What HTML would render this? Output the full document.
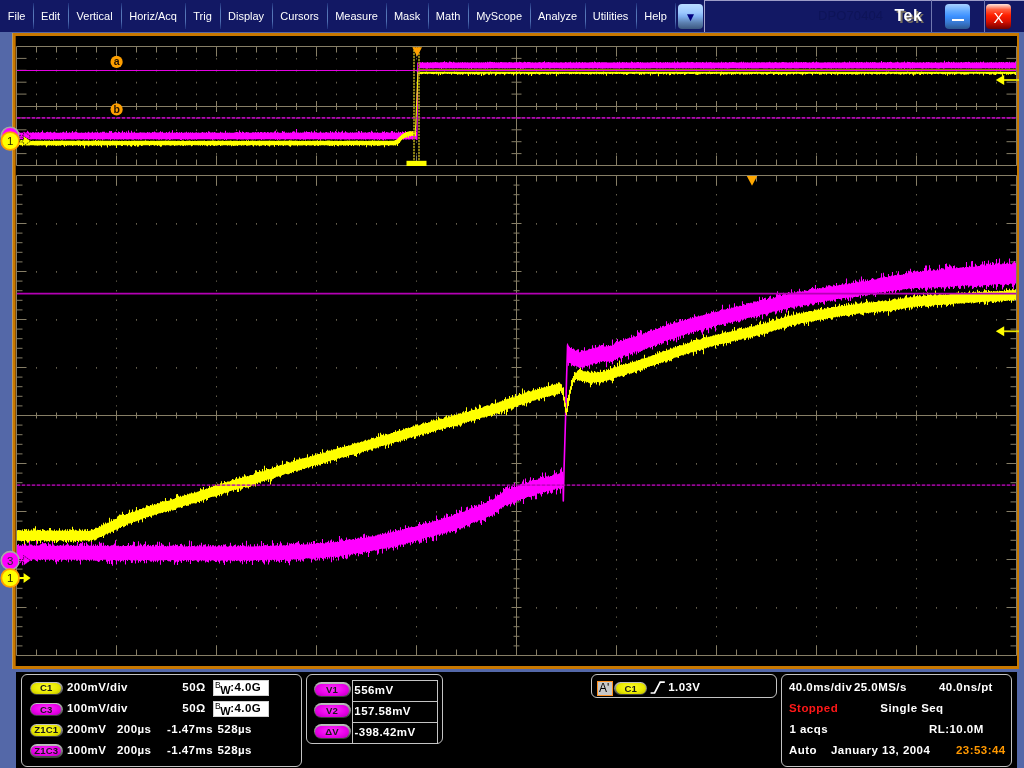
<!DOCTYPE html>
<html lang="en"><head><meta charset="utf-8"><title>Tek DPO70404</title>
<style>
html,body{margin:0;padding:0;}
body{width:1024px;height:768px;position:relative;overflow:hidden;background:#5468a8;font-family:"Liberation Sans",sans-serif;}
div,span{position:absolute;box-sizing:border-box;white-space:pre;}
#mb{left:0;top:0;width:1024px;height:32px;background:#121864;}
.mi{top:0;height:32px;line-height:32px;color:#fff;font-size:11px;text-align:center;padding-top:0px;}
.sep{top:3px;width:1px;height:26px;background:linear-gradient(#1c2c78,#5070b4 30%,#5878b8 50%,#5070b4 70%,#1c2c78);}
.vl{top:0;width:1px;height:32px;background:#7078b0;}
#dd{left:678px;top:4px;width:25px;height:25px;border-radius:4px;background:linear-gradient(#b8dcff,#9cc8ff 35%,#80b0f0 50%,#5c80b0 75%,#3c5880);}
#mn{left:945px;top:4px;width:25px;height:25px;border-radius:4px;background:linear-gradient(#a8d0ff,#60a8ff 30%,#3c90ff 50%,#3878d0 75%,#2c5890);}
#cl{left:986px;top:4px;width:25px;height:25px;border-radius:4px;background:linear-gradient(#ffe8e0,#ff6040 22%,#ff2000 45%,#d81000 70%,#700000);}
#org{left:12px;top:33px;width:1007px;height:636px;background:#c87800;}
#blk{left:16px;top:36px;width:1001px;height:630px;background:#000;}
#bot{left:16px;top:672px;width:1001px;height:96px;background:#000;}
.pn{border:1px solid #c4c4c4;border-radius:6px;}
.t{color:#fff;font-weight:bold;font-size:11.5px;line-height:1;letter-spacing:0.45px;}
.pill{border-radius:8px;}
.pt{color:#181818;font-weight:bold;font-size:9.6px;line-height:1;text-align:center;letter-spacing:0.1px;}
</style></head>
<body><div id="all" style="left:0;top:0;width:1024px;height:768px;will-change:transform">
<div id="mb">
<span class="mi" style="left:0.1px;width:33px">File</span>
<div class="sep" style="left:33px"></div>
<span class="mi" style="left:33.1px;width:35px">Edit</span>
<div class="sep" style="left:68px"></div>
<span class="mi" style="left:68.1px;width:53px">Vertical</span>
<div class="sep" style="left:121px"></div>
<span class="mi" style="left:121.1px;width:64px">Horiz/Acq</span>
<div class="sep" style="left:185px"></div>
<span class="mi" style="left:185.1px;width:35px">Trig</span>
<div class="sep" style="left:220px"></div>
<span class="mi" style="left:220.1px;width:52px">Display</span>
<div class="sep" style="left:272px"></div>
<span class="mi" style="left:272.1px;width:55px">Cursors</span>
<div class="sep" style="left:327px"></div>
<span class="mi" style="left:327.1px;width:59px">Measure</span>
<div class="sep" style="left:386px"></div>
<span class="mi" style="left:386.1px;width:42px">Mask</span>
<div class="sep" style="left:428px"></div>
<span class="mi" style="left:428.1px;width:40px">Math</span>
<div class="sep" style="left:468px"></div>
<span class="mi" style="left:468.1px;width:62px">MyScope</span>
<div class="sep" style="left:530px"></div>
<span class="mi" style="left:530.1px;width:55px">Analyze</span>
<div class="sep" style="left:585px"></div>
<span class="mi" style="left:585.1px;width:51px">Utilities</span>
<div class="sep" style="left:636px"></div>
<span class="mi" style="left:636.1px;width:39px">Help</span>
<div class="sep" style="left:675px"></div>
<div id="dd"><svg width="25" height="25" style="position:absolute;left:0;top:0"><path d="M9 10.3H16L12.5 17.2Z" fill="#000080"/></svg></div>
<div class="vl" style="left:704px;background:#a4a4cc"></div>
<div style="left:704px;top:0;width:320px;height:1px;background:#9c9cc8"></div>
<span style="left:818px;top:9px;font-size:13px;line-height:14px;color:#0e1458;letter-spacing:0.1px">DPO70404</span>
<span style="left:894.5px;top:7.5px;font-size:16px;line-height:16px;font-weight:bold;color:#fff;text-shadow:2px 2px 0 #787060;letter-spacing:0.5px">Tek</span>
<div class="vl" style="left:931px"></div><div class="vl" style="left:984px"></div>
<div id="mn"><div style="left:6.5px;top:15px;width:12px;height:2.4px;background:#fff"></div></div>
<div id="cl"><span style="left:0;top:0;width:25px;text-align:center;line-height:25px;top:0.5px;font-size:15px;color:#fff">X</span></div>
</div>
<div id="org"></div><div id="blk"></div><div id="bot"></div>
<svg width="1024" height="768" viewBox="0 0 1024 768" style="position:absolute;left:0;top:0">
<path d="M12.5 33V669" stroke="#c09858" stroke-width="1"/><path d="M15.5 36V666" stroke="#8c5000" stroke-width="1"/>
<path d="M16.5 46.5H1016.5V165.5H16.5Z M16.5 106.5H1016.5 M516.5 46.5V165.5" fill="none" stroke="#867e66" stroke-width="1"/>
<path d="M36.5 46.5v6M36.5 165.5v-6M36.5 103.0v7.0M56.5 46.5v6M56.5 165.5v-6M56.5 103.0v7.0M76.5 46.5v6M76.5 165.5v-6M76.5 103.0v7.0M96.5 46.5v6M96.5 165.5v-6M96.5 103.0v7.0M116.5 46.5v10M116.5 165.5v-10M116.5 101.0v11.0M136.5 46.5v6M136.5 165.5v-6M136.5 103.0v7.0M156.5 46.5v6M156.5 165.5v-6M156.5 103.0v7.0M176.5 46.5v6M176.5 165.5v-6M176.5 103.0v7.0M196.5 46.5v6M196.5 165.5v-6M196.5 103.0v7.0M216.5 46.5v10M216.5 165.5v-10M216.5 101.0v11.0M236.5 46.5v6M236.5 165.5v-6M236.5 103.0v7.0M256.5 46.5v6M256.5 165.5v-6M256.5 103.0v7.0M276.5 46.5v6M276.5 165.5v-6M276.5 103.0v7.0M296.5 46.5v6M296.5 165.5v-6M296.5 103.0v7.0M316.5 46.5v10M316.5 165.5v-10M316.5 101.0v11.0M336.5 46.5v6M336.5 165.5v-6M336.5 103.0v7.0M356.5 46.5v6M356.5 165.5v-6M356.5 103.0v7.0M376.5 46.5v6M376.5 165.5v-6M376.5 103.0v7.0M396.5 46.5v6M396.5 165.5v-6M396.5 103.0v7.0M416.5 46.5v10M416.5 165.5v-10M416.5 101.0v11.0M436.5 46.5v6M436.5 165.5v-6M436.5 103.0v7.0M456.5 46.5v6M456.5 165.5v-6M456.5 103.0v7.0M476.5 46.5v6M476.5 165.5v-6M476.5 103.0v7.0M496.5 46.5v6M496.5 165.5v-6M496.5 103.0v7.0M516.5 46.5v10M516.5 165.5v-10M516.5 101.0v11.0M536.5 46.5v6M536.5 165.5v-6M536.5 103.0v7.0M556.5 46.5v6M556.5 165.5v-6M556.5 103.0v7.0M576.5 46.5v6M576.5 165.5v-6M576.5 103.0v7.0M596.5 46.5v6M596.5 165.5v-6M596.5 103.0v7.0M616.5 46.5v10M616.5 165.5v-10M616.5 101.0v11.0M636.5 46.5v6M636.5 165.5v-6M636.5 103.0v7.0M656.5 46.5v6M656.5 165.5v-6M656.5 103.0v7.0M676.5 46.5v6M676.5 165.5v-6M676.5 103.0v7.0M696.5 46.5v6M696.5 165.5v-6M696.5 103.0v7.0M716.5 46.5v10M716.5 165.5v-10M716.5 101.0v11.0M736.5 46.5v6M736.5 165.5v-6M736.5 103.0v7.0M756.5 46.5v6M756.5 165.5v-6M756.5 103.0v7.0M776.5 46.5v6M776.5 165.5v-6M776.5 103.0v7.0M796.5 46.5v6M796.5 165.5v-6M796.5 103.0v7.0M816.5 46.5v10M816.5 165.5v-10M816.5 101.0v11.0M836.5 46.5v6M836.5 165.5v-6M836.5 103.0v7.0M856.5 46.5v6M856.5 165.5v-6M856.5 103.0v7.0M876.5 46.5v6M876.5 165.5v-6M876.5 103.0v7.0M896.5 46.5v6M896.5 165.5v-6M896.5 103.0v7.0M916.5 46.5v10M916.5 165.5v-10M916.5 101.0v11.0M936.5 46.5v6M936.5 165.5v-6M936.5 103.0v7.0M956.5 46.5v6M956.5 165.5v-6M956.5 103.0v7.0M976.5 46.5v6M976.5 165.5v-6M976.5 103.0v7.0M996.5 46.5v6M996.5 165.5v-6M996.5 103.0v7.0M16.5 58.4h10M1016.5 58.4h-10M511.5 58.4h10M16.5 70.3h10M1016.5 70.3h-10M511.5 70.3h10M16.5 82.2h10M1016.5 82.2h-10M511.5 82.2h10M16.5 94.1h10M1016.5 94.1h-10M511.5 94.1h10M16.5 117.9h10M1016.5 117.9h-10M511.5 117.9h10M16.5 129.8h10M1016.5 129.8h-10M511.5 129.8h10M16.5 141.7h10M1016.5 141.7h-10M511.5 141.7h10M16.5 153.6h10M1016.5 153.6h-10M511.5 153.6h10" fill="none" stroke="#867e66" stroke-width="1"/>
<path d="M36 57.9h1v1.7h-1zM56 57.9h1v1.7h-1zM76 57.9h1v1.7h-1zM96 57.9h1v1.7h-1zM116 57.9h1v1.7h-1zM136 57.9h1v1.7h-1zM156 57.9h1v1.7h-1zM176 57.9h1v1.7h-1zM196 57.9h1v1.7h-1zM216 57.9h1v1.7h-1zM236 57.9h1v1.7h-1zM256 57.9h1v1.7h-1zM276 57.9h1v1.7h-1zM296 57.9h1v1.7h-1zM316 57.9h1v1.7h-1zM336 57.9h1v1.7h-1zM356 57.9h1v1.7h-1zM376 57.9h1v1.7h-1zM396 57.9h1v1.7h-1zM416 57.9h1v1.7h-1zM436 57.9h1v1.7h-1zM456 57.9h1v1.7h-1zM476 57.9h1v1.7h-1zM496 57.9h1v1.7h-1zM536 57.9h1v1.7h-1zM556 57.9h1v1.7h-1zM576 57.9h1v1.7h-1zM596 57.9h1v1.7h-1zM616 57.9h1v1.7h-1zM636 57.9h1v1.7h-1zM656 57.9h1v1.7h-1zM676 57.9h1v1.7h-1zM696 57.9h1v1.7h-1zM716 57.9h1v1.7h-1zM736 57.9h1v1.7h-1zM756 57.9h1v1.7h-1zM776 57.9h1v1.7h-1zM796 57.9h1v1.7h-1zM816 57.9h1v1.7h-1zM836 57.9h1v1.7h-1zM856 57.9h1v1.7h-1zM876 57.9h1v1.7h-1zM896 57.9h1v1.7h-1zM916 57.9h1v1.7h-1zM936 57.9h1v1.7h-1zM956 57.9h1v1.7h-1zM976 57.9h1v1.7h-1zM996 57.9h1v1.7h-1zM36 69.8h1v1.7h-1zM56 69.8h1v1.7h-1zM76 69.8h1v1.7h-1zM96 69.8h1v1.7h-1zM116 69.8h1v1.7h-1zM136 69.8h1v1.7h-1zM156 69.8h1v1.7h-1zM176 69.8h1v1.7h-1zM196 69.8h1v1.7h-1zM216 69.8h1v1.7h-1zM236 69.8h1v1.7h-1zM256 69.8h1v1.7h-1zM276 69.8h1v1.7h-1zM296 69.8h1v1.7h-1zM316 69.8h1v1.7h-1zM336 69.8h1v1.7h-1zM356 69.8h1v1.7h-1zM376 69.8h1v1.7h-1zM396 69.8h1v1.7h-1zM416 69.8h1v1.7h-1zM436 69.8h1v1.7h-1zM456 69.8h1v1.7h-1zM476 69.8h1v1.7h-1zM496 69.8h1v1.7h-1zM536 69.8h1v1.7h-1zM556 69.8h1v1.7h-1zM576 69.8h1v1.7h-1zM596 69.8h1v1.7h-1zM616 69.8h1v1.7h-1zM636 69.8h1v1.7h-1zM656 69.8h1v1.7h-1zM676 69.8h1v1.7h-1zM696 69.8h1v1.7h-1zM716 69.8h1v1.7h-1zM736 69.8h1v1.7h-1zM756 69.8h1v1.7h-1zM776 69.8h1v1.7h-1zM796 69.8h1v1.7h-1zM816 69.8h1v1.7h-1zM836 69.8h1v1.7h-1zM856 69.8h1v1.7h-1zM876 69.8h1v1.7h-1zM896 69.8h1v1.7h-1zM916 69.8h1v1.7h-1zM936 69.8h1v1.7h-1zM956 69.8h1v1.7h-1zM976 69.8h1v1.7h-1zM996 69.8h1v1.7h-1zM36 81.7h1v1.7h-1zM56 81.7h1v1.7h-1zM76 81.7h1v1.7h-1zM96 81.7h1v1.7h-1zM116 81.7h1v1.7h-1zM136 81.7h1v1.7h-1zM156 81.7h1v1.7h-1zM176 81.7h1v1.7h-1zM196 81.7h1v1.7h-1zM216 81.7h1v1.7h-1zM236 81.7h1v1.7h-1zM256 81.7h1v1.7h-1zM276 81.7h1v1.7h-1zM296 81.7h1v1.7h-1zM316 81.7h1v1.7h-1zM336 81.7h1v1.7h-1zM356 81.7h1v1.7h-1zM376 81.7h1v1.7h-1zM396 81.7h1v1.7h-1zM416 81.7h1v1.7h-1zM436 81.7h1v1.7h-1zM456 81.7h1v1.7h-1zM476 81.7h1v1.7h-1zM496 81.7h1v1.7h-1zM536 81.7h1v1.7h-1zM556 81.7h1v1.7h-1zM576 81.7h1v1.7h-1zM596 81.7h1v1.7h-1zM616 81.7h1v1.7h-1zM636 81.7h1v1.7h-1zM656 81.7h1v1.7h-1zM676 81.7h1v1.7h-1zM696 81.7h1v1.7h-1zM716 81.7h1v1.7h-1zM736 81.7h1v1.7h-1zM756 81.7h1v1.7h-1zM776 81.7h1v1.7h-1zM796 81.7h1v1.7h-1zM816 81.7h1v1.7h-1zM836 81.7h1v1.7h-1zM856 81.7h1v1.7h-1zM876 81.7h1v1.7h-1zM896 81.7h1v1.7h-1zM916 81.7h1v1.7h-1zM936 81.7h1v1.7h-1zM956 81.7h1v1.7h-1zM976 81.7h1v1.7h-1zM996 81.7h1v1.7h-1zM36 93.6h1v1.7h-1zM56 93.6h1v1.7h-1zM76 93.6h1v1.7h-1zM96 93.6h1v1.7h-1zM116 93.6h1v1.7h-1zM136 93.6h1v1.7h-1zM156 93.6h1v1.7h-1zM176 93.6h1v1.7h-1zM196 93.6h1v1.7h-1zM216 93.6h1v1.7h-1zM236 93.6h1v1.7h-1zM256 93.6h1v1.7h-1zM276 93.6h1v1.7h-1zM296 93.6h1v1.7h-1zM316 93.6h1v1.7h-1zM336 93.6h1v1.7h-1zM356 93.6h1v1.7h-1zM376 93.6h1v1.7h-1zM396 93.6h1v1.7h-1zM416 93.6h1v1.7h-1zM436 93.6h1v1.7h-1zM456 93.6h1v1.7h-1zM476 93.6h1v1.7h-1zM496 93.6h1v1.7h-1zM536 93.6h1v1.7h-1zM556 93.6h1v1.7h-1zM576 93.6h1v1.7h-1zM596 93.6h1v1.7h-1zM616 93.6h1v1.7h-1zM636 93.6h1v1.7h-1zM656 93.6h1v1.7h-1zM676 93.6h1v1.7h-1zM696 93.6h1v1.7h-1zM716 93.6h1v1.7h-1zM736 93.6h1v1.7h-1zM756 93.6h1v1.7h-1zM776 93.6h1v1.7h-1zM796 93.6h1v1.7h-1zM816 93.6h1v1.7h-1zM836 93.6h1v1.7h-1zM856 93.6h1v1.7h-1zM876 93.6h1v1.7h-1zM896 93.6h1v1.7h-1zM916 93.6h1v1.7h-1zM936 93.6h1v1.7h-1zM956 93.6h1v1.7h-1zM976 93.6h1v1.7h-1zM996 93.6h1v1.7h-1zM36 117.4h1v1.7h-1zM56 117.4h1v1.7h-1zM76 117.4h1v1.7h-1zM96 117.4h1v1.7h-1zM116 117.4h1v1.7h-1zM136 117.4h1v1.7h-1zM156 117.4h1v1.7h-1zM176 117.4h1v1.7h-1zM196 117.4h1v1.7h-1zM216 117.4h1v1.7h-1zM236 117.4h1v1.7h-1zM256 117.4h1v1.7h-1zM276 117.4h1v1.7h-1zM296 117.4h1v1.7h-1zM316 117.4h1v1.7h-1zM336 117.4h1v1.7h-1zM356 117.4h1v1.7h-1zM376 117.4h1v1.7h-1zM396 117.4h1v1.7h-1zM416 117.4h1v1.7h-1zM436 117.4h1v1.7h-1zM456 117.4h1v1.7h-1zM476 117.4h1v1.7h-1zM496 117.4h1v1.7h-1zM536 117.4h1v1.7h-1zM556 117.4h1v1.7h-1zM576 117.4h1v1.7h-1zM596 117.4h1v1.7h-1zM616 117.4h1v1.7h-1zM636 117.4h1v1.7h-1zM656 117.4h1v1.7h-1zM676 117.4h1v1.7h-1zM696 117.4h1v1.7h-1zM716 117.4h1v1.7h-1zM736 117.4h1v1.7h-1zM756 117.4h1v1.7h-1zM776 117.4h1v1.7h-1zM796 117.4h1v1.7h-1zM816 117.4h1v1.7h-1zM836 117.4h1v1.7h-1zM856 117.4h1v1.7h-1zM876 117.4h1v1.7h-1zM896 117.4h1v1.7h-1zM916 117.4h1v1.7h-1zM936 117.4h1v1.7h-1zM956 117.4h1v1.7h-1zM976 117.4h1v1.7h-1zM996 117.4h1v1.7h-1zM36 129.3h1v1.7h-1zM56 129.3h1v1.7h-1zM76 129.3h1v1.7h-1zM96 129.3h1v1.7h-1zM116 129.3h1v1.7h-1zM136 129.3h1v1.7h-1zM156 129.3h1v1.7h-1zM176 129.3h1v1.7h-1zM196 129.3h1v1.7h-1zM216 129.3h1v1.7h-1zM236 129.3h1v1.7h-1zM256 129.3h1v1.7h-1zM276 129.3h1v1.7h-1zM296 129.3h1v1.7h-1zM316 129.3h1v1.7h-1zM336 129.3h1v1.7h-1zM356 129.3h1v1.7h-1zM376 129.3h1v1.7h-1zM396 129.3h1v1.7h-1zM416 129.3h1v1.7h-1zM436 129.3h1v1.7h-1zM456 129.3h1v1.7h-1zM476 129.3h1v1.7h-1zM496 129.3h1v1.7h-1zM536 129.3h1v1.7h-1zM556 129.3h1v1.7h-1zM576 129.3h1v1.7h-1zM596 129.3h1v1.7h-1zM616 129.3h1v1.7h-1zM636 129.3h1v1.7h-1zM656 129.3h1v1.7h-1zM676 129.3h1v1.7h-1zM696 129.3h1v1.7h-1zM716 129.3h1v1.7h-1zM736 129.3h1v1.7h-1zM756 129.3h1v1.7h-1zM776 129.3h1v1.7h-1zM796 129.3h1v1.7h-1zM816 129.3h1v1.7h-1zM836 129.3h1v1.7h-1zM856 129.3h1v1.7h-1zM876 129.3h1v1.7h-1zM896 129.3h1v1.7h-1zM916 129.3h1v1.7h-1zM936 129.3h1v1.7h-1zM956 129.3h1v1.7h-1zM976 129.3h1v1.7h-1zM996 129.3h1v1.7h-1zM36 141.2h1v1.7h-1zM56 141.2h1v1.7h-1zM76 141.2h1v1.7h-1zM96 141.2h1v1.7h-1zM116 141.2h1v1.7h-1zM136 141.2h1v1.7h-1zM156 141.2h1v1.7h-1zM176 141.2h1v1.7h-1zM196 141.2h1v1.7h-1zM216 141.2h1v1.7h-1zM236 141.2h1v1.7h-1zM256 141.2h1v1.7h-1zM276 141.2h1v1.7h-1zM296 141.2h1v1.7h-1zM316 141.2h1v1.7h-1zM336 141.2h1v1.7h-1zM356 141.2h1v1.7h-1zM376 141.2h1v1.7h-1zM396 141.2h1v1.7h-1zM416 141.2h1v1.7h-1zM436 141.2h1v1.7h-1zM456 141.2h1v1.7h-1zM476 141.2h1v1.7h-1zM496 141.2h1v1.7h-1zM536 141.2h1v1.7h-1zM556 141.2h1v1.7h-1zM576 141.2h1v1.7h-1zM596 141.2h1v1.7h-1zM616 141.2h1v1.7h-1zM636 141.2h1v1.7h-1zM656 141.2h1v1.7h-1zM676 141.2h1v1.7h-1zM696 141.2h1v1.7h-1zM716 141.2h1v1.7h-1zM736 141.2h1v1.7h-1zM756 141.2h1v1.7h-1zM776 141.2h1v1.7h-1zM796 141.2h1v1.7h-1zM816 141.2h1v1.7h-1zM836 141.2h1v1.7h-1zM856 141.2h1v1.7h-1zM876 141.2h1v1.7h-1zM896 141.2h1v1.7h-1zM916 141.2h1v1.7h-1zM936 141.2h1v1.7h-1zM956 141.2h1v1.7h-1zM976 141.2h1v1.7h-1zM996 141.2h1v1.7h-1zM36 153.1h1v1.7h-1zM56 153.1h1v1.7h-1zM76 153.1h1v1.7h-1zM96 153.1h1v1.7h-1zM116 153.1h1v1.7h-1zM136 153.1h1v1.7h-1zM156 153.1h1v1.7h-1zM176 153.1h1v1.7h-1zM196 153.1h1v1.7h-1zM216 153.1h1v1.7h-1zM236 153.1h1v1.7h-1zM256 153.1h1v1.7h-1zM276 153.1h1v1.7h-1zM296 153.1h1v1.7h-1zM316 153.1h1v1.7h-1zM336 153.1h1v1.7h-1zM356 153.1h1v1.7h-1zM376 153.1h1v1.7h-1zM396 153.1h1v1.7h-1zM416 153.1h1v1.7h-1zM436 153.1h1v1.7h-1zM456 153.1h1v1.7h-1zM476 153.1h1v1.7h-1zM496 153.1h1v1.7h-1zM536 153.1h1v1.7h-1zM556 153.1h1v1.7h-1zM576 153.1h1v1.7h-1zM596 153.1h1v1.7h-1zM616 153.1h1v1.7h-1zM636 153.1h1v1.7h-1zM656 153.1h1v1.7h-1zM676 153.1h1v1.7h-1zM696 153.1h1v1.7h-1zM716 153.1h1v1.7h-1zM736 153.1h1v1.7h-1zM756 153.1h1v1.7h-1zM776 153.1h1v1.7h-1zM796 153.1h1v1.7h-1zM816 153.1h1v1.7h-1zM836 153.1h1v1.7h-1zM856 153.1h1v1.7h-1zM876 153.1h1v1.7h-1zM896 153.1h1v1.7h-1zM916 153.1h1v1.7h-1zM936 153.1h1v1.7h-1zM956 153.1h1v1.7h-1zM976 153.1h1v1.7h-1zM996 153.1h1v1.7h-1z" fill="#867e66" opacity="0.75"/>
<path d="M16.5 175.5H1016.5V655.5H16.5Z M16.5 415.5H1016.5 M516.5 175.5V655.5" fill="none" stroke="#867e66" stroke-width="1"/>
<path d="M36.5 175.5v6M36.5 655.5v-6M36.5 412.5v6M56.5 175.5v6M56.5 655.5v-6M56.5 412.5v6M76.5 175.5v6M76.5 655.5v-6M76.5 412.5v6M96.5 175.5v6M96.5 655.5v-6M96.5 412.5v6M116.5 175.5v10M116.5 655.5v-10M116.5 410.5v10M136.5 175.5v6M136.5 655.5v-6M136.5 412.5v6M156.5 175.5v6M156.5 655.5v-6M156.5 412.5v6M176.5 175.5v6M176.5 655.5v-6M176.5 412.5v6M196.5 175.5v6M196.5 655.5v-6M196.5 412.5v6M216.5 175.5v10M216.5 655.5v-10M216.5 410.5v10M236.5 175.5v6M236.5 655.5v-6M236.5 412.5v6M256.5 175.5v6M256.5 655.5v-6M256.5 412.5v6M276.5 175.5v6M276.5 655.5v-6M276.5 412.5v6M296.5 175.5v6M296.5 655.5v-6M296.5 412.5v6M316.5 175.5v10M316.5 655.5v-10M316.5 410.5v10M336.5 175.5v6M336.5 655.5v-6M336.5 412.5v6M356.5 175.5v6M356.5 655.5v-6M356.5 412.5v6M376.5 175.5v6M376.5 655.5v-6M376.5 412.5v6M396.5 175.5v6M396.5 655.5v-6M396.5 412.5v6M416.5 175.5v10M416.5 655.5v-10M416.5 410.5v10M436.5 175.5v6M436.5 655.5v-6M436.5 412.5v6M456.5 175.5v6M456.5 655.5v-6M456.5 412.5v6M476.5 175.5v6M476.5 655.5v-6M476.5 412.5v6M496.5 175.5v6M496.5 655.5v-6M496.5 412.5v6M516.5 175.5v10M516.5 655.5v-10M516.5 410.5v10M536.5 175.5v6M536.5 655.5v-6M536.5 412.5v6M556.5 175.5v6M556.5 655.5v-6M556.5 412.5v6M576.5 175.5v6M576.5 655.5v-6M576.5 412.5v6M596.5 175.5v6M596.5 655.5v-6M596.5 412.5v6M616.5 175.5v10M616.5 655.5v-10M616.5 410.5v10M636.5 175.5v6M636.5 655.5v-6M636.5 412.5v6M656.5 175.5v6M656.5 655.5v-6M656.5 412.5v6M676.5 175.5v6M676.5 655.5v-6M676.5 412.5v6M696.5 175.5v6M696.5 655.5v-6M696.5 412.5v6M716.5 175.5v10M716.5 655.5v-10M716.5 410.5v10M736.5 175.5v6M736.5 655.5v-6M736.5 412.5v6M756.5 175.5v6M756.5 655.5v-6M756.5 412.5v6M776.5 175.5v6M776.5 655.5v-6M776.5 412.5v6M796.5 175.5v6M796.5 655.5v-6M796.5 412.5v6M816.5 175.5v10M816.5 655.5v-10M816.5 410.5v10M836.5 175.5v6M836.5 655.5v-6M836.5 412.5v6M856.5 175.5v6M856.5 655.5v-6M856.5 412.5v6M876.5 175.5v6M876.5 655.5v-6M876.5 412.5v6M896.5 175.5v6M896.5 655.5v-6M896.5 412.5v6M916.5 175.5v10M916.5 655.5v-10M916.5 410.5v10M936.5 175.5v6M936.5 655.5v-6M936.5 412.5v6M956.5 175.5v6M956.5 655.5v-6M956.5 412.5v6M976.5 175.5v6M976.5 655.5v-6M976.5 412.5v6M996.5 175.5v6M996.5 655.5v-6M996.5 412.5v6M16.5 185.1h6M1016.5 185.1h-6M513.5 185.1h6M16.5 194.7h6M1016.5 194.7h-6M513.5 194.7h6M16.5 204.3h6M1016.5 204.3h-6M513.5 204.3h6M16.5 213.9h6M1016.5 213.9h-6M513.5 213.9h6M16.5 223.5h10M1016.5 223.5h-10M511.5 223.5h10M16.5 233.1h6M1016.5 233.1h-6M513.5 233.1h6M16.5 242.7h6M1016.5 242.7h-6M513.5 242.7h6M16.5 252.3h6M1016.5 252.3h-6M513.5 252.3h6M16.5 261.9h6M1016.5 261.9h-6M513.5 261.9h6M16.5 271.5h10M1016.5 271.5h-10M511.5 271.5h10M16.5 281.1h6M1016.5 281.1h-6M513.5 281.1h6M16.5 290.7h6M1016.5 290.7h-6M513.5 290.7h6M16.5 300.3h6M1016.5 300.3h-6M513.5 300.3h6M16.5 309.9h6M1016.5 309.9h-6M513.5 309.9h6M16.5 319.5h10M1016.5 319.5h-10M511.5 319.5h10M16.5 329.1h6M1016.5 329.1h-6M513.5 329.1h6M16.5 338.7h6M1016.5 338.7h-6M513.5 338.7h6M16.5 348.3h6M1016.5 348.3h-6M513.5 348.3h6M16.5 357.9h6M1016.5 357.9h-6M513.5 357.9h6M16.5 367.5h10M1016.5 367.5h-10M511.5 367.5h10M16.5 377.1h6M1016.5 377.1h-6M513.5 377.1h6M16.5 386.7h6M1016.5 386.7h-6M513.5 386.7h6M16.5 396.3h6M1016.5 396.3h-6M513.5 396.3h6M16.5 405.9h6M1016.5 405.9h-6M513.5 405.9h6M16.5 415.5h10M1016.5 415.5h-10M511.5 415.5h10M16.5 425.1h6M1016.5 425.1h-6M513.5 425.1h6M16.5 434.7h6M1016.5 434.7h-6M513.5 434.7h6M16.5 444.3h6M1016.5 444.3h-6M513.5 444.3h6M16.5 453.9h6M1016.5 453.9h-6M513.5 453.9h6M16.5 463.5h10M1016.5 463.5h-10M511.5 463.5h10M16.5 473.1h6M1016.5 473.1h-6M513.5 473.1h6M16.5 482.7h6M1016.5 482.7h-6M513.5 482.7h6M16.5 492.3h6M1016.5 492.3h-6M513.5 492.3h6M16.5 501.9h6M1016.5 501.9h-6M513.5 501.9h6M16.5 511.5h10M1016.5 511.5h-10M511.5 511.5h10M16.5 521.1h6M1016.5 521.1h-6M513.5 521.1h6M16.5 530.7h6M1016.5 530.7h-6M513.5 530.7h6M16.5 540.3h6M1016.5 540.3h-6M513.5 540.3h6M16.5 549.9h6M1016.5 549.9h-6M513.5 549.9h6M16.5 559.5h10M1016.5 559.5h-10M511.5 559.5h10M16.5 569.1h6M1016.5 569.1h-6M513.5 569.1h6M16.5 578.7h6M1016.5 578.7h-6M513.5 578.7h6M16.5 588.3h6M1016.5 588.3h-6M513.5 588.3h6M16.5 597.9h6M1016.5 597.9h-6M513.5 597.9h6M16.5 607.5h10M1016.5 607.5h-10M511.5 607.5h10M16.5 617.1h6M1016.5 617.1h-6M513.5 617.1h6M16.5 626.7h6M1016.5 626.7h-6M513.5 626.7h6M16.5 636.3h6M1016.5 636.3h-6M513.5 636.3h6M16.5 645.9h6M1016.5 645.9h-6M513.5 645.9h6" fill="none" stroke="#867e66" stroke-width="1"/>
<path d="M36 223h1v1.7h-1zM56 223h1v1.7h-1zM76 223h1v1.7h-1zM96 223h1v1.7h-1zM116 223h1v1.7h-1zM136 223h1v1.7h-1zM156 223h1v1.7h-1zM176 223h1v1.7h-1zM196 223h1v1.7h-1zM216 223h1v1.7h-1zM236 223h1v1.7h-1zM256 223h1v1.7h-1zM276 223h1v1.7h-1zM296 223h1v1.7h-1zM316 223h1v1.7h-1zM336 223h1v1.7h-1zM356 223h1v1.7h-1zM376 223h1v1.7h-1zM396 223h1v1.7h-1zM416 223h1v1.7h-1zM436 223h1v1.7h-1zM456 223h1v1.7h-1zM476 223h1v1.7h-1zM496 223h1v1.7h-1zM516 223h1v1.7h-1zM536 223h1v1.7h-1zM556 223h1v1.7h-1zM576 223h1v1.7h-1zM596 223h1v1.7h-1zM616 223h1v1.7h-1zM636 223h1v1.7h-1zM656 223h1v1.7h-1zM676 223h1v1.7h-1zM696 223h1v1.7h-1zM716 223h1v1.7h-1zM736 223h1v1.7h-1zM756 223h1v1.7h-1zM776 223h1v1.7h-1zM796 223h1v1.7h-1zM816 223h1v1.7h-1zM836 223h1v1.7h-1zM856 223h1v1.7h-1zM876 223h1v1.7h-1zM896 223h1v1.7h-1zM916 223h1v1.7h-1zM936 223h1v1.7h-1zM956 223h1v1.7h-1zM976 223h1v1.7h-1zM996 223h1v1.7h-1zM36 271h1v1.7h-1zM56 271h1v1.7h-1zM76 271h1v1.7h-1zM96 271h1v1.7h-1zM116 271h1v1.7h-1zM136 271h1v1.7h-1zM156 271h1v1.7h-1zM176 271h1v1.7h-1zM196 271h1v1.7h-1zM216 271h1v1.7h-1zM236 271h1v1.7h-1zM256 271h1v1.7h-1zM276 271h1v1.7h-1zM296 271h1v1.7h-1zM316 271h1v1.7h-1zM336 271h1v1.7h-1zM356 271h1v1.7h-1zM376 271h1v1.7h-1zM396 271h1v1.7h-1zM416 271h1v1.7h-1zM436 271h1v1.7h-1zM456 271h1v1.7h-1zM476 271h1v1.7h-1zM496 271h1v1.7h-1zM516 271h1v1.7h-1zM536 271h1v1.7h-1zM556 271h1v1.7h-1zM576 271h1v1.7h-1zM596 271h1v1.7h-1zM616 271h1v1.7h-1zM636 271h1v1.7h-1zM656 271h1v1.7h-1zM676 271h1v1.7h-1zM696 271h1v1.7h-1zM716 271h1v1.7h-1zM736 271h1v1.7h-1zM756 271h1v1.7h-1zM776 271h1v1.7h-1zM796 271h1v1.7h-1zM816 271h1v1.7h-1zM836 271h1v1.7h-1zM856 271h1v1.7h-1zM876 271h1v1.7h-1zM896 271h1v1.7h-1zM916 271h1v1.7h-1zM936 271h1v1.7h-1zM956 271h1v1.7h-1zM976 271h1v1.7h-1zM996 271h1v1.7h-1zM36 319h1v1.7h-1zM56 319h1v1.7h-1zM76 319h1v1.7h-1zM96 319h1v1.7h-1zM116 319h1v1.7h-1zM136 319h1v1.7h-1zM156 319h1v1.7h-1zM176 319h1v1.7h-1zM196 319h1v1.7h-1zM216 319h1v1.7h-1zM236 319h1v1.7h-1zM256 319h1v1.7h-1zM276 319h1v1.7h-1zM296 319h1v1.7h-1zM316 319h1v1.7h-1zM336 319h1v1.7h-1zM356 319h1v1.7h-1zM376 319h1v1.7h-1zM396 319h1v1.7h-1zM416 319h1v1.7h-1zM436 319h1v1.7h-1zM456 319h1v1.7h-1zM476 319h1v1.7h-1zM496 319h1v1.7h-1zM516 319h1v1.7h-1zM536 319h1v1.7h-1zM556 319h1v1.7h-1zM576 319h1v1.7h-1zM596 319h1v1.7h-1zM616 319h1v1.7h-1zM636 319h1v1.7h-1zM656 319h1v1.7h-1zM676 319h1v1.7h-1zM696 319h1v1.7h-1zM716 319h1v1.7h-1zM736 319h1v1.7h-1zM756 319h1v1.7h-1zM776 319h1v1.7h-1zM796 319h1v1.7h-1zM816 319h1v1.7h-1zM836 319h1v1.7h-1zM856 319h1v1.7h-1zM876 319h1v1.7h-1zM896 319h1v1.7h-1zM916 319h1v1.7h-1zM936 319h1v1.7h-1zM956 319h1v1.7h-1zM976 319h1v1.7h-1zM996 319h1v1.7h-1zM36 367h1v1.7h-1zM56 367h1v1.7h-1zM76 367h1v1.7h-1zM96 367h1v1.7h-1zM116 367h1v1.7h-1zM136 367h1v1.7h-1zM156 367h1v1.7h-1zM176 367h1v1.7h-1zM196 367h1v1.7h-1zM216 367h1v1.7h-1zM236 367h1v1.7h-1zM256 367h1v1.7h-1zM276 367h1v1.7h-1zM296 367h1v1.7h-1zM316 367h1v1.7h-1zM336 367h1v1.7h-1zM356 367h1v1.7h-1zM376 367h1v1.7h-1zM396 367h1v1.7h-1zM416 367h1v1.7h-1zM436 367h1v1.7h-1zM456 367h1v1.7h-1zM476 367h1v1.7h-1zM496 367h1v1.7h-1zM516 367h1v1.7h-1zM536 367h1v1.7h-1zM556 367h1v1.7h-1zM576 367h1v1.7h-1zM596 367h1v1.7h-1zM616 367h1v1.7h-1zM636 367h1v1.7h-1zM656 367h1v1.7h-1zM676 367h1v1.7h-1zM696 367h1v1.7h-1zM716 367h1v1.7h-1zM736 367h1v1.7h-1zM756 367h1v1.7h-1zM776 367h1v1.7h-1zM796 367h1v1.7h-1zM816 367h1v1.7h-1zM836 367h1v1.7h-1zM856 367h1v1.7h-1zM876 367h1v1.7h-1zM896 367h1v1.7h-1zM916 367h1v1.7h-1zM936 367h1v1.7h-1zM956 367h1v1.7h-1zM976 367h1v1.7h-1zM996 367h1v1.7h-1zM36 463h1v1.7h-1zM56 463h1v1.7h-1zM76 463h1v1.7h-1zM96 463h1v1.7h-1zM116 463h1v1.7h-1zM136 463h1v1.7h-1zM156 463h1v1.7h-1zM176 463h1v1.7h-1zM196 463h1v1.7h-1zM216 463h1v1.7h-1zM236 463h1v1.7h-1zM256 463h1v1.7h-1zM276 463h1v1.7h-1zM296 463h1v1.7h-1zM316 463h1v1.7h-1zM336 463h1v1.7h-1zM356 463h1v1.7h-1zM376 463h1v1.7h-1zM396 463h1v1.7h-1zM416 463h1v1.7h-1zM436 463h1v1.7h-1zM456 463h1v1.7h-1zM476 463h1v1.7h-1zM496 463h1v1.7h-1zM516 463h1v1.7h-1zM536 463h1v1.7h-1zM556 463h1v1.7h-1zM576 463h1v1.7h-1zM596 463h1v1.7h-1zM616 463h1v1.7h-1zM636 463h1v1.7h-1zM656 463h1v1.7h-1zM676 463h1v1.7h-1zM696 463h1v1.7h-1zM716 463h1v1.7h-1zM736 463h1v1.7h-1zM756 463h1v1.7h-1zM776 463h1v1.7h-1zM796 463h1v1.7h-1zM816 463h1v1.7h-1zM836 463h1v1.7h-1zM856 463h1v1.7h-1zM876 463h1v1.7h-1zM896 463h1v1.7h-1zM916 463h1v1.7h-1zM936 463h1v1.7h-1zM956 463h1v1.7h-1zM976 463h1v1.7h-1zM996 463h1v1.7h-1zM36 511h1v1.7h-1zM56 511h1v1.7h-1zM76 511h1v1.7h-1zM96 511h1v1.7h-1zM116 511h1v1.7h-1zM136 511h1v1.7h-1zM156 511h1v1.7h-1zM176 511h1v1.7h-1zM196 511h1v1.7h-1zM216 511h1v1.7h-1zM236 511h1v1.7h-1zM256 511h1v1.7h-1zM276 511h1v1.7h-1zM296 511h1v1.7h-1zM316 511h1v1.7h-1zM336 511h1v1.7h-1zM356 511h1v1.7h-1zM376 511h1v1.7h-1zM396 511h1v1.7h-1zM416 511h1v1.7h-1zM436 511h1v1.7h-1zM456 511h1v1.7h-1zM476 511h1v1.7h-1zM496 511h1v1.7h-1zM516 511h1v1.7h-1zM536 511h1v1.7h-1zM556 511h1v1.7h-1zM576 511h1v1.7h-1zM596 511h1v1.7h-1zM616 511h1v1.7h-1zM636 511h1v1.7h-1zM656 511h1v1.7h-1zM676 511h1v1.7h-1zM696 511h1v1.7h-1zM716 511h1v1.7h-1zM736 511h1v1.7h-1zM756 511h1v1.7h-1zM776 511h1v1.7h-1zM796 511h1v1.7h-1zM816 511h1v1.7h-1zM836 511h1v1.7h-1zM856 511h1v1.7h-1zM876 511h1v1.7h-1zM896 511h1v1.7h-1zM916 511h1v1.7h-1zM936 511h1v1.7h-1zM956 511h1v1.7h-1zM976 511h1v1.7h-1zM996 511h1v1.7h-1zM36 559h1v1.7h-1zM56 559h1v1.7h-1zM76 559h1v1.7h-1zM96 559h1v1.7h-1zM116 559h1v1.7h-1zM136 559h1v1.7h-1zM156 559h1v1.7h-1zM176 559h1v1.7h-1zM196 559h1v1.7h-1zM216 559h1v1.7h-1zM236 559h1v1.7h-1zM256 559h1v1.7h-1zM276 559h1v1.7h-1zM296 559h1v1.7h-1zM316 559h1v1.7h-1zM336 559h1v1.7h-1zM356 559h1v1.7h-1zM376 559h1v1.7h-1zM396 559h1v1.7h-1zM416 559h1v1.7h-1zM436 559h1v1.7h-1zM456 559h1v1.7h-1zM476 559h1v1.7h-1zM496 559h1v1.7h-1zM516 559h1v1.7h-1zM536 559h1v1.7h-1zM556 559h1v1.7h-1zM576 559h1v1.7h-1zM596 559h1v1.7h-1zM616 559h1v1.7h-1zM636 559h1v1.7h-1zM656 559h1v1.7h-1zM676 559h1v1.7h-1zM696 559h1v1.7h-1zM716 559h1v1.7h-1zM736 559h1v1.7h-1zM756 559h1v1.7h-1zM776 559h1v1.7h-1zM796 559h1v1.7h-1zM816 559h1v1.7h-1zM836 559h1v1.7h-1zM856 559h1v1.7h-1zM876 559h1v1.7h-1zM896 559h1v1.7h-1zM916 559h1v1.7h-1zM936 559h1v1.7h-1zM956 559h1v1.7h-1zM976 559h1v1.7h-1zM996 559h1v1.7h-1zM36 607h1v1.7h-1zM56 607h1v1.7h-1zM76 607h1v1.7h-1zM96 607h1v1.7h-1zM116 607h1v1.7h-1zM136 607h1v1.7h-1zM156 607h1v1.7h-1zM176 607h1v1.7h-1zM196 607h1v1.7h-1zM216 607h1v1.7h-1zM236 607h1v1.7h-1zM256 607h1v1.7h-1zM276 607h1v1.7h-1zM296 607h1v1.7h-1zM316 607h1v1.7h-1zM336 607h1v1.7h-1zM356 607h1v1.7h-1zM376 607h1v1.7h-1zM396 607h1v1.7h-1zM416 607h1v1.7h-1zM436 607h1v1.7h-1zM456 607h1v1.7h-1zM476 607h1v1.7h-1zM496 607h1v1.7h-1zM516 607h1v1.7h-1zM536 607h1v1.7h-1zM556 607h1v1.7h-1zM576 607h1v1.7h-1zM596 607h1v1.7h-1zM616 607h1v1.7h-1zM636 607h1v1.7h-1zM656 607h1v1.7h-1zM676 607h1v1.7h-1zM696 607h1v1.7h-1zM716 607h1v1.7h-1zM736 607h1v1.7h-1zM756 607h1v1.7h-1zM776 607h1v1.7h-1zM796 607h1v1.7h-1zM816 607h1v1.7h-1zM836 607h1v1.7h-1zM856 607h1v1.7h-1zM876 607h1v1.7h-1zM896 607h1v1.7h-1zM916 607h1v1.7h-1zM936 607h1v1.7h-1zM956 607h1v1.7h-1zM976 607h1v1.7h-1zM996 607h1v1.7h-1zM116 184.4h1v1.4h-1zM116 194h1v1.4h-1zM116 203.6h1v1.4h-1zM116 213.2h1v1.4h-1zM116 232.4h1v1.4h-1zM116 242h1v1.4h-1zM116 251.6h1v1.4h-1zM116 261.2h1v1.4h-1zM116 280.4h1v1.4h-1zM116 290h1v1.4h-1zM116 299.6h1v1.4h-1zM116 309.2h1v1.4h-1zM116 328.4h1v1.4h-1zM116 338h1v1.4h-1zM116 347.6h1v1.4h-1zM116 357.2h1v1.4h-1zM116 376.4h1v1.4h-1zM116 386h1v1.4h-1zM116 395.6h1v1.4h-1zM116 405.2h1v1.4h-1zM116 424.4h1v1.4h-1zM116 434h1v1.4h-1zM116 443.6h1v1.4h-1zM116 453.2h1v1.4h-1zM116 472.4h1v1.4h-1zM116 482h1v1.4h-1zM116 491.6h1v1.4h-1zM116 501.2h1v1.4h-1zM116 520.4h1v1.4h-1zM116 530h1v1.4h-1zM116 539.6h1v1.4h-1zM116 549.2h1v1.4h-1zM116 568.4h1v1.4h-1zM116 578h1v1.4h-1zM116 587.6h1v1.4h-1zM116 597.2h1v1.4h-1zM116 616.4h1v1.4h-1zM116 626h1v1.4h-1zM116 635.6h1v1.4h-1zM116 645.2h1v1.4h-1zM216 184.4h1v1.4h-1zM216 194h1v1.4h-1zM216 203.6h1v1.4h-1zM216 213.2h1v1.4h-1zM216 232.4h1v1.4h-1zM216 242h1v1.4h-1zM216 251.6h1v1.4h-1zM216 261.2h1v1.4h-1zM216 280.4h1v1.4h-1zM216 290h1v1.4h-1zM216 299.6h1v1.4h-1zM216 309.2h1v1.4h-1zM216 328.4h1v1.4h-1zM216 338h1v1.4h-1zM216 347.6h1v1.4h-1zM216 357.2h1v1.4h-1zM216 376.4h1v1.4h-1zM216 386h1v1.4h-1zM216 395.6h1v1.4h-1zM216 405.2h1v1.4h-1zM216 424.4h1v1.4h-1zM216 434h1v1.4h-1zM216 443.6h1v1.4h-1zM216 453.2h1v1.4h-1zM216 472.4h1v1.4h-1zM216 482h1v1.4h-1zM216 491.6h1v1.4h-1zM216 501.2h1v1.4h-1zM216 520.4h1v1.4h-1zM216 530h1v1.4h-1zM216 539.6h1v1.4h-1zM216 549.2h1v1.4h-1zM216 568.4h1v1.4h-1zM216 578h1v1.4h-1zM216 587.6h1v1.4h-1zM216 597.2h1v1.4h-1zM216 616.4h1v1.4h-1zM216 626h1v1.4h-1zM216 635.6h1v1.4h-1zM216 645.2h1v1.4h-1zM316 184.4h1v1.4h-1zM316 194h1v1.4h-1zM316 203.6h1v1.4h-1zM316 213.2h1v1.4h-1zM316 232.4h1v1.4h-1zM316 242h1v1.4h-1zM316 251.6h1v1.4h-1zM316 261.2h1v1.4h-1zM316 280.4h1v1.4h-1zM316 290h1v1.4h-1zM316 299.6h1v1.4h-1zM316 309.2h1v1.4h-1zM316 328.4h1v1.4h-1zM316 338h1v1.4h-1zM316 347.6h1v1.4h-1zM316 357.2h1v1.4h-1zM316 376.4h1v1.4h-1zM316 386h1v1.4h-1zM316 395.6h1v1.4h-1zM316 405.2h1v1.4h-1zM316 424.4h1v1.4h-1zM316 434h1v1.4h-1zM316 443.6h1v1.4h-1zM316 453.2h1v1.4h-1zM316 472.4h1v1.4h-1zM316 482h1v1.4h-1zM316 491.6h1v1.4h-1zM316 501.2h1v1.4h-1zM316 520.4h1v1.4h-1zM316 530h1v1.4h-1zM316 539.6h1v1.4h-1zM316 549.2h1v1.4h-1zM316 568.4h1v1.4h-1zM316 578h1v1.4h-1zM316 587.6h1v1.4h-1zM316 597.2h1v1.4h-1zM316 616.4h1v1.4h-1zM316 626h1v1.4h-1zM316 635.6h1v1.4h-1zM316 645.2h1v1.4h-1zM416 184.4h1v1.4h-1zM416 194h1v1.4h-1zM416 203.6h1v1.4h-1zM416 213.2h1v1.4h-1zM416 232.4h1v1.4h-1zM416 242h1v1.4h-1zM416 251.6h1v1.4h-1zM416 261.2h1v1.4h-1zM416 280.4h1v1.4h-1zM416 290h1v1.4h-1zM416 299.6h1v1.4h-1zM416 309.2h1v1.4h-1zM416 328.4h1v1.4h-1zM416 338h1v1.4h-1zM416 347.6h1v1.4h-1zM416 357.2h1v1.4h-1zM416 376.4h1v1.4h-1zM416 386h1v1.4h-1zM416 395.6h1v1.4h-1zM416 405.2h1v1.4h-1zM416 424.4h1v1.4h-1zM416 434h1v1.4h-1zM416 443.6h1v1.4h-1zM416 453.2h1v1.4h-1zM416 472.4h1v1.4h-1zM416 482h1v1.4h-1zM416 491.6h1v1.4h-1zM416 501.2h1v1.4h-1zM416 520.4h1v1.4h-1zM416 530h1v1.4h-1zM416 539.6h1v1.4h-1zM416 549.2h1v1.4h-1zM416 568.4h1v1.4h-1zM416 578h1v1.4h-1zM416 587.6h1v1.4h-1zM416 597.2h1v1.4h-1zM416 616.4h1v1.4h-1zM416 626h1v1.4h-1zM416 635.6h1v1.4h-1zM416 645.2h1v1.4h-1zM616 184.4h1v1.4h-1zM616 194h1v1.4h-1zM616 203.6h1v1.4h-1zM616 213.2h1v1.4h-1zM616 232.4h1v1.4h-1zM616 242h1v1.4h-1zM616 251.6h1v1.4h-1zM616 261.2h1v1.4h-1zM616 280.4h1v1.4h-1zM616 290h1v1.4h-1zM616 299.6h1v1.4h-1zM616 309.2h1v1.4h-1zM616 328.4h1v1.4h-1zM616 338h1v1.4h-1zM616 347.6h1v1.4h-1zM616 357.2h1v1.4h-1zM616 376.4h1v1.4h-1zM616 386h1v1.4h-1zM616 395.6h1v1.4h-1zM616 405.2h1v1.4h-1zM616 424.4h1v1.4h-1zM616 434h1v1.4h-1zM616 443.6h1v1.4h-1zM616 453.2h1v1.4h-1zM616 472.4h1v1.4h-1zM616 482h1v1.4h-1zM616 491.6h1v1.4h-1zM616 501.2h1v1.4h-1zM616 520.4h1v1.4h-1zM616 530h1v1.4h-1zM616 539.6h1v1.4h-1zM616 549.2h1v1.4h-1zM616 568.4h1v1.4h-1zM616 578h1v1.4h-1zM616 587.6h1v1.4h-1zM616 597.2h1v1.4h-1zM616 616.4h1v1.4h-1zM616 626h1v1.4h-1zM616 635.6h1v1.4h-1zM616 645.2h1v1.4h-1zM716 184.4h1v1.4h-1zM716 194h1v1.4h-1zM716 203.6h1v1.4h-1zM716 213.2h1v1.4h-1zM716 232.4h1v1.4h-1zM716 242h1v1.4h-1zM716 251.6h1v1.4h-1zM716 261.2h1v1.4h-1zM716 280.4h1v1.4h-1zM716 290h1v1.4h-1zM716 299.6h1v1.4h-1zM716 309.2h1v1.4h-1zM716 328.4h1v1.4h-1zM716 338h1v1.4h-1zM716 347.6h1v1.4h-1zM716 357.2h1v1.4h-1zM716 376.4h1v1.4h-1zM716 386h1v1.4h-1zM716 395.6h1v1.4h-1zM716 405.2h1v1.4h-1zM716 424.4h1v1.4h-1zM716 434h1v1.4h-1zM716 443.6h1v1.4h-1zM716 453.2h1v1.4h-1zM716 472.4h1v1.4h-1zM716 482h1v1.4h-1zM716 491.6h1v1.4h-1zM716 501.2h1v1.4h-1zM716 520.4h1v1.4h-1zM716 530h1v1.4h-1zM716 539.6h1v1.4h-1zM716 549.2h1v1.4h-1zM716 568.4h1v1.4h-1zM716 578h1v1.4h-1zM716 587.6h1v1.4h-1zM716 597.2h1v1.4h-1zM716 616.4h1v1.4h-1zM716 626h1v1.4h-1zM716 635.6h1v1.4h-1zM716 645.2h1v1.4h-1zM816 184.4h1v1.4h-1zM816 194h1v1.4h-1zM816 203.6h1v1.4h-1zM816 213.2h1v1.4h-1zM816 232.4h1v1.4h-1zM816 242h1v1.4h-1zM816 251.6h1v1.4h-1zM816 261.2h1v1.4h-1zM816 280.4h1v1.4h-1zM816 290h1v1.4h-1zM816 299.6h1v1.4h-1zM816 309.2h1v1.4h-1zM816 328.4h1v1.4h-1zM816 338h1v1.4h-1zM816 347.6h1v1.4h-1zM816 357.2h1v1.4h-1zM816 376.4h1v1.4h-1zM816 386h1v1.4h-1zM816 395.6h1v1.4h-1zM816 405.2h1v1.4h-1zM816 424.4h1v1.4h-1zM816 434h1v1.4h-1zM816 443.6h1v1.4h-1zM816 453.2h1v1.4h-1zM816 472.4h1v1.4h-1zM816 482h1v1.4h-1zM816 491.6h1v1.4h-1zM816 501.2h1v1.4h-1zM816 520.4h1v1.4h-1zM816 530h1v1.4h-1zM816 539.6h1v1.4h-1zM816 549.2h1v1.4h-1zM816 568.4h1v1.4h-1zM816 578h1v1.4h-1zM816 587.6h1v1.4h-1zM816 597.2h1v1.4h-1zM816 616.4h1v1.4h-1zM816 626h1v1.4h-1zM816 635.6h1v1.4h-1zM816 645.2h1v1.4h-1zM916 184.4h1v1.4h-1zM916 194h1v1.4h-1zM916 203.6h1v1.4h-1zM916 213.2h1v1.4h-1zM916 232.4h1v1.4h-1zM916 242h1v1.4h-1zM916 251.6h1v1.4h-1zM916 261.2h1v1.4h-1zM916 280.4h1v1.4h-1zM916 290h1v1.4h-1zM916 299.6h1v1.4h-1zM916 309.2h1v1.4h-1zM916 328.4h1v1.4h-1zM916 338h1v1.4h-1zM916 347.6h1v1.4h-1zM916 357.2h1v1.4h-1zM916 376.4h1v1.4h-1zM916 386h1v1.4h-1zM916 395.6h1v1.4h-1zM916 405.2h1v1.4h-1zM916 424.4h1v1.4h-1zM916 434h1v1.4h-1zM916 443.6h1v1.4h-1zM916 453.2h1v1.4h-1zM916 472.4h1v1.4h-1zM916 482h1v1.4h-1zM916 491.6h1v1.4h-1zM916 501.2h1v1.4h-1zM916 520.4h1v1.4h-1zM916 530h1v1.4h-1zM916 539.6h1v1.4h-1zM916 549.2h1v1.4h-1zM916 568.4h1v1.4h-1zM916 578h1v1.4h-1zM916 587.6h1v1.4h-1zM916 597.2h1v1.4h-1zM916 616.4h1v1.4h-1zM916 626h1v1.4h-1zM916 635.6h1v1.4h-1zM916 645.2h1v1.4h-1z" fill="#867e66" opacity="0.75"/>
<path d="M17.5 132.58V139.23M18.5 132.21V139.22M19.5 132.37V139.3M20.5 132.77V139.35M21.5 132.78V139.32M22.5 132.76V139.22M23.5 132.49V139.57M24.5 132.73V139.25M25.5 132.25V139.82M26.5 132.32V139.31M27.5 130.71V139.21M28.5 131.71V139.27M29.5 132.71V139.23M30.5 132.59V139.56M31.5 132.69V139.38M32.5 132.23V139.3M33.5 132.36V139.21M34.5 132.77V139.25M35.5 132.16V139.32M36.5 132.59V139.38M37.5 132.46V139.27M38.5 131.91V139.45M39.5 132.64V139.38M40.5 132.38V139.64M41.5 132.07V139.27M42.5 130.6V139.23M43.5 132.5V139.5M44.5 132.71V139.34M45.5 132.78V139.43M46.5 131.99V139.38M47.5 131.63V139.28M48.5 132.13V139.39M49.5 132.31V139.33M50.5 131.77V139.81M51.5 132.44V139.43M52.5 132.76V139.45M53.5 132.22V140.24M54.5 131.83V139.27M55.5 132.53V139.43M56.5 132.79V139.33M57.5 132.7V139.23M58.5 132.77V139.51M59.5 132.72V139.26M60.5 132.52V139.63M61.5 132.75V139.33M62.5 132.35V139.65M63.5 131.84V139.62M64.5 132.62V139.31M65.5 132.55V139.65M66.5 131.03V139.23M67.5 132.69V139.26M68.5 132.65V139.34M69.5 132.3V139.26M70.5 132.8V139.31M71.5 132.54V139.38M72.5 131.09V139.45M73.5 132.39V139.4M74.5 132.17V139.21M75.5 131.51V139.52M76.5 131.64V139.54M77.5 132.52V139.31M78.5 132.74V139.41M79.5 132.76V139.21M80.5 132.67V139.24M81.5 132.57V139.21M82.5 132.8V139.23M83.5 132.74V139.29M84.5 132.79V139.64M85.5 132.27V139.23M86.5 132.64V139.29M87.5 132.55V139.23M88.5 131.74V140.25M89.5 132.45V139.34M90.5 132.75V139.22M91.5 132.57V139.26M92.5 131.81V139.24M93.5 132.79V139.83M94.5 132.38V139.23M95.5 132.36V139.21M96.5 132.38V140.01M97.5 131.69V139.45M98.5 132.63V139.3M99.5 132.7V139.51M100.5 132.37V139.52M101.5 132.58V139.25M102.5 131.87V140.08M103.5 131.73V139.54M104.5 131.84V139.48M105.5 132.66V139.35M106.5 132.55V139.21M107.5 132.78V139.27M108.5 132.63V139.45M109.5 131.04V139.32M110.5 131.25V140.13M111.5 131.06V139.3M112.5 132.66V139.25M113.5 132.68V139.25M114.5 132.25V139.68M115.5 131.77V139.34M116.5 132.21V139.54M117.5 132.75V139.43M118.5 131.45V139.52M119.5 132.02V139.34M120.5 132.69V139.53M121.5 132.57V139.54M122.5 130.8V139.31M123.5 132.51V139.82M124.5 132.08V139.24M125.5 132.72V139.23M126.5 131.48V139.54M127.5 132.71V139.57M128.5 130.6V139.42M129.5 132.56V139.37M130.5 132.72V139.2M131.5 130.82V139.42M132.5 132.38V139.77M133.5 132.48V139.63M134.5 131.82V139.25M135.5 132.64V139.27M136.5 132.65V139.39M137.5 132.63V139.31M138.5 132.72V139.71M139.5 132.56V139.33M140.5 132.31V139.69M141.5 132.49V139.72M142.5 132.41V139.36M143.5 132.38V139.2M144.5 132.48V139.24M145.5 132.8V139.54M146.5 132.69V139.33M147.5 132.08V139.37M148.5 132.58V139.35M149.5 132.35V139.52M150.5 132.74V139.37M151.5 132.64V139.27M152.5 131.97V139.35M153.5 132.34V139.5M154.5 131.44V139.32M155.5 132.27V139.35M156.5 132.4V139.45M157.5 132.46V139.36M158.5 132.44V139.8M159.5 132.13V139.64M160.5 131.2V139.26M161.5 132.34V139.8M162.5 131.77V139.23M163.5 132.73V139.32M164.5 132.76V139.26M165.5 132.76V139.43M166.5 131.94V139.68M167.5 132.71V139.46M168.5 132.2V139.23M169.5 131.6V139.92M170.5 132.66V139.84M171.5 132.52V139.34M172.5 130.23V139.58M173.5 132.7V139.32M174.5 132.39V139.29M175.5 132.68V139.28M176.5 132.08V139.2M177.5 132.35V139.32M178.5 132.79V139.28M179.5 132.25V139.35M180.5 132.76V140.08M181.5 131.93V139.95M182.5 132.74V139.26M183.5 132.78V139.52M184.5 132.62V139.23M185.5 132.49V139.71M186.5 131.84V139.26M187.5 132.71V139.73M188.5 132.33V139.45M189.5 132.75V139.21M190.5 132.15V139.32M191.5 132.76V139.79M192.5 132.24V139.54M193.5 132.75V139.61M194.5 132.76V139.62M195.5 132.46V139.29M196.5 132.35V139.75M197.5 132.63V139.23M198.5 132.38V139.26M199.5 132.74V139.24M200.5 132.77V139.25M201.5 132.59V139.28M202.5 132V139.27M203.5 132.41V139.24M204.5 132.56V139.2M205.5 132.64V139.2M206.5 132.06V139.37M207.5 132.68V139.34M208.5 131.27V139.22M209.5 131.84V139.32M210.5 132.42V139.58M211.5 132.52V139.35M212.5 132.15V140.05M213.5 132.57V139.57M214.5 132.11V139.41M215.5 132.51V139.29M216.5 132.77V139.23M217.5 132.76V139.48M218.5 132.63V139.24M219.5 132.75V139.59M220.5 131.66V139.43M221.5 132.61V139.26M222.5 132.61V139.33M223.5 132.7V139.32M224.5 132.63V139.89M225.5 130.79V139.37M226.5 132.64V139.91M227.5 132.59V139.29M228.5 132.8V139.3M229.5 132.44V139.35M230.5 132.67V139.35M231.5 132.8V139.26M232.5 132.75V139.31M233.5 132.78V139.2M234.5 132.6V139.26M235.5 132.31V139.36M236.5 132.02V139.43M237.5 132.1V139.64M238.5 132.52V139.28M239.5 130.46V139.23M240.5 132.08V139.42M241.5 132.77V139.58M242.5 131.55V139.41M243.5 132.06V139.55M244.5 132.72V139.36M245.5 132.41V139.58M246.5 131.89V139.57M247.5 132.31V139.67M248.5 132.16V139.45M249.5 132.65V139.21M250.5 132.72V139.29M251.5 132.74V139.58M252.5 132.34V139.41M253.5 132.25V139.44M254.5 132.42V139.2M255.5 131.91V139.49M256.5 132.41V139.36M257.5 132.2V139.21M258.5 132.05V139.26M259.5 132.76V139.26M260.5 132.07V139.25M261.5 132.05V139.98M262.5 132.42V139.3M263.5 132.43V139.44M264.5 131.98V139.4M265.5 132.22V139.22M266.5 132.71V139.26M267.5 132.04V139.28M268.5 132.33V139.2M269.5 132.76V139.27M270.5 132.18V139.45M271.5 132.17V139.27M272.5 132.39V139.33M273.5 132.45V139.23M274.5 131.54V139.25M275.5 130.66V139.78M276.5 132.79V139.33M277.5 131.84V139.92M278.5 132.47V139.27M279.5 132.67V139.81M280.5 132.67V139.38M281.5 132.71V139.36M282.5 131.09V139.23M283.5 131.84V139.35M284.5 131.58V139.46M285.5 132.65V139.68M286.5 132.43V139.21M287.5 132.8V139.34M288.5 132.46V139.28M289.5 132.72V139.29M290.5 132.59V139.59M291.5 132.8V139.49M292.5 131.78V139.23M293.5 131.34V139.46M294.5 131.5V139.27M295.5 132.54V139.3M296.5 129.04V139.39M297.5 132.55V139.32M298.5 132.62V139.21M299.5 132.74V139.58M300.5 132.61V139.78M301.5 132.64V139.26M302.5 132.4V139.24M303.5 132.54V139.86M304.5 131.59V139.55M305.5 132.24V139.71M306.5 131.22V139.37M307.5 132.09V139.21M308.5 132.06V139.33M309.5 132.02V139.42M310.5 132.61V139.21M311.5 131.34V139.23M312.5 132.44V139.29M313.5 132.6V139.48M314.5 130.7V139.26M315.5 132.2V139.28M316.5 132.34V139.31M317.5 132.7V139.24M318.5 132.67V139.7M319.5 132.42V139.25M320.5 131.47V140.39M321.5 132.47V139.23M322.5 132.68V139.22M323.5 132.57V139.22M324.5 132.65V139.26M325.5 132.33V139.66M326.5 132.02V139.31M327.5 132.5V139.36M328.5 132.54V139.29M329.5 132.76V139.27M330.5 130.88V139.23M331.5 132.41V139.41M332.5 131.69V139.25M333.5 132.62V139.26M334.5 132.51V139.32M335.5 131.08V139.6M336.5 131.64V139.2M337.5 132.78V139.46M338.5 131.53V139.33M339.5 132.3V139.2M340.5 132.52V139.75M341.5 131.82V139.61M342.5 130.79V139.26M343.5 132.74V139.24M344.5 132.39V139.44M345.5 131.21V139.47M346.5 132.22V139.5M347.5 132.46V139.37M348.5 132.78V139.52M349.5 132.65V139.73M350.5 132.22V139.28M351.5 132.72V139.26M352.5 132.23V139.45M353.5 132.73V139.22M354.5 132.38V139.38M355.5 132.52V139.25M356.5 132.29V139.2M357.5 132.6V139.33M358.5 131.01V139.42M359.5 131.59V139.34M360.5 132.65V139.26M361.5 130.99V139.46M362.5 132.59V139.2M363.5 132.41V139.44M364.5 132.49V139.26M365.5 132.18V139.74M366.5 132.66V139.21M367.5 132.57V139.31M368.5 132.16V139.25M369.5 131.91V139.48M370.5 132.41V139.25M371.5 130.84V139.28M372.5 131.84V139.26M373.5 132.66V139.5M374.5 132.6V139.84M375.5 132.42V139.24M376.5 132.66V139.31M377.5 132.19V139.82M378.5 132.71V139.3M379.5 132.67V139.97M380.5 132.71V139.21M381.5 132.77V139.3M382.5 131.52V139.65M383.5 132.06V140.46M384.5 131.3V139.28M385.5 132.69V139.78M386.5 132.03V139.21M387.5 132.19V139.3M388.5 132.54V139.28M389.5 132.7V139.2M390.5 132.62V139.29M391.5 131.06V139.23M392.5 130.93V139.25M393.5 132.55V139.56M394.5 131.83V139.32M395.5 132.77V139.33M396.5 132.54V139.73M397.5 132.68V139.3M398.5 131.53V139.21M399.5 132.5V139.55M400.5 131.99V139.21M401.5 132.78V139.21M402.5 131.39V139.26M403.5 132.03V139.68M404.5 132.57V139.27M405.5 131.03V139.4M406.5 132.63V139.46M407.5 132.59V139.27M408.5 132.8V139.5M409.5 131.41V139.41M410.5 131.19V139.21M411.5 132.65V139.34M412.5 131.04V139.85M413.5 132.53V139.26M414.5 132.49V139.34M415.5 131.33V139.24M416.5 131.89V139.48M419.5 62.03V68.48M420.5 62.25V68.35M421.5 62.4V68.35M422.5 62.09V68.31M423.5 62.44V68.47M424.5 62.42V68.31M425.5 62.49V68.4M426.5 62.39V68.77M427.5 61.92V68.83M428.5 62.42V68.31M429.5 62.47V68.38M430.5 62.17V68.37M431.5 62.43V68.36M432.5 62.24V68.43M433.5 62.13V68.53M434.5 62.21V68.32M435.5 62V68.34M436.5 62.27V68.36M437.5 62.14V68.33M438.5 62.42V68.33M439.5 62.46V68.56M440.5 62.27V68.35M441.5 62.36V68.89M442.5 62.31V68.33M443.5 62.05V68.43M444.5 61.23V68.31M445.5 62.33V68.51M446.5 62V68.59M447.5 62.49V68.34M448.5 62.47V68.33M449.5 61.53V68.41M450.5 61.78V68.36M451.5 61.96V68.37M452.5 62.42V68.48M453.5 61.71V68.31M454.5 62.26V68.42M455.5 62.43V68.36M456.5 62.46V68.33M457.5 62.42V68.41M458.5 62.22V68.33M459.5 62.5V68.35M460.5 62.19V68.32M461.5 62.4V68.33M462.5 62.07V68.4M463.5 62.48V68.31M464.5 62.36V68.4M465.5 62.22V68.31M466.5 62.45V68.44M467.5 62.36V68.34M468.5 62.4V68.67M469.5 62.4V68.4M470.5 62.38V68.36M471.5 61.96V68.98M472.5 62.38V68.33M473.5 62.15V68.33M474.5 62.5V68.58M475.5 62.35V68.51M476.5 62.36V68.56M477.5 62.33V68.32M478.5 62.5V68.4M479.5 62.22V68.59M480.5 62.47V68.42M481.5 62.37V68.38M482.5 62.46V68.34M483.5 62.3V68.61M484.5 62.47V68.38M485.5 62.06V68.71M486.5 62.44V68.32M487.5 61.73V68.75M488.5 62.32V68.31M489.5 61.8V68.36M490.5 61.87V68.42M491.5 62.03V68.32M492.5 62.08V68.33M493.5 62.36V68.52M494.5 62.02V68.32M495.5 62.43V68.36M496.5 62.3V68.36M497.5 62.46V68.33M498.5 62.15V68.57M499.5 62.49V68.4M500.5 62.12V68.3M501.5 62.01V68.32M502.5 62.25V68.4M503.5 62.23V68.34M504.5 62.35V68.4M505.5 62.35V68.43M506.5 62.34V68.37M507.5 62.49V68.42M508.5 62.32V68.33M509.5 62.11V68.48M510.5 62.33V68.32M511.5 62.33V68.31M512.5 62.46V68.37M513.5 62.47V68.37M514.5 62.31V68.3M515.5 62.23V68.31M516.5 62.14V68.48M517.5 62.31V68.31M518.5 62.31V68.36M519.5 61.69V68.32M520.5 61.97V68.97M521.5 62.14V68.5M522.5 62.44V68.78M523.5 62.32V68.68M524.5 61.83V68.32M525.5 62.08V68.62M526.5 62.48V68.35M527.5 62.12V68.32M528.5 61.89V68.34M529.5 62.04V68.32M530.5 62.31V68.6M531.5 62.44V68.34M532.5 62.31V68.35M533.5 62.49V68.32M534.5 62.45V68.63M535.5 62.19V68.57M536.5 62.45V68.48M537.5 62.47V68.39M538.5 62.23V68.35M539.5 61.94V68.4M540.5 62.27V68.56M541.5 62.47V68.89M542.5 62.23V68.36M543.5 62.07V68.34M544.5 61.24V68.4M545.5 62.38V68.47M546.5 62.34V68.32M547.5 62.13V68.31M548.5 62.04V68.34M549.5 62.22V68.8M550.5 62.26V68.43M551.5 62.4V68.3M552.5 62.49V68.32M553.5 62.24V68.37M554.5 62.31V68.57M555.5 62.46V68.33M556.5 62.21V68.3M557.5 62.5V68.35M558.5 62.47V68.35M559.5 62.43V68.41M560.5 62.26V68.33M561.5 62.24V68.38M562.5 62.46V68.63M563.5 62.42V68.32M564.5 62.47V68.42M565.5 61.95V68.48M566.5 62.36V68.34M567.5 62.5V68.42M568.5 62.28V68.35M569.5 62.22V68.37M570.5 61.75V68.46M571.5 62.42V68.58M572.5 62.49V68.39M573.5 62.36V68.33M574.5 62.48V68.48M575.5 62.5V68.4M576.5 61.74V68.32M577.5 62.44V68.41M578.5 62.31V68.42M579.5 62.05V68.32M580.5 62.4V68.34M581.5 62.49V68.56M582.5 62.09V68.45M583.5 62.5V68.52M584.5 62.13V68.38M585.5 62.13V68.37M586.5 62.43V68.31M587.5 62.43V68.3M588.5 62.39V68.47M589.5 62.18V68.52M590.5 62.16V68.34M591.5 62.28V68.37M592.5 62.08V68.39M593.5 62.42V68.42M594.5 61.59V68.33M595.5 61.93V68.3M596.5 62.42V68.33M597.5 62.13V68.65M598.5 62.13V68.35M599.5 61.93V68.35M600.5 62.43V68.59M601.5 62.23V68.44M602.5 62.2V68.76M603.5 62.33V68.52M604.5 62.18V68.53M605.5 62.34V68.45M606.5 62.27V68.34M607.5 62.44V68.42M608.5 62.48V68.59M609.5 62.46V68.3M610.5 62.47V68.62M611.5 62.39V68.32M612.5 62.49V68.31M613.5 62.18V68.42M614.5 62.18V68.46M615.5 62.48V68.41M616.5 62.38V68.5M617.5 62.04V68.57M618.5 62.48V68.54M619.5 61.84V68.65M620.5 62.47V68.33M621.5 62.47V68.3M622.5 61.99V68.5M623.5 62.23V68.51M624.5 62.23V68.34M625.5 62.47V68.31M626.5 62.12V68.33M627.5 62.4V68.37M628.5 62.49V68.34M629.5 62.41V68.45M630.5 62.38V68.35M631.5 61.6V68.38M632.5 61.99V68.42M633.5 62.49V68.36M634.5 62.35V68.48M635.5 62.39V68.45M636.5 62.29V68.33M637.5 61.96V68.31M638.5 62.04V68.32M639.5 62.5V68.33M640.5 62.11V68.76M641.5 62.5V68.38M642.5 62.32V68.49M643.5 62.44V68.38M644.5 62.38V68.51M645.5 62.42V68.65M646.5 62.41V68.33M647.5 62.18V68.38M648.5 62.47V68.42M649.5 62.48V68.49M650.5 62.18V68.49M651.5 62.23V68.35M652.5 62.36V68.36M653.5 61.9V68.31M654.5 61.91V68.3M655.5 62.44V68.34M656.5 61.87V68.38M657.5 62.37V68.56M658.5 62.43V68.37M659.5 62.3V68.47M660.5 62.12V68.42M661.5 62.38V68.35M662.5 62.45V68.52M663.5 62.21V68.46M664.5 62.45V68.37M665.5 62.1V68.4M666.5 62.46V68.37M667.5 61.92V68.33M668.5 62.44V68.34M669.5 62.17V68.52M670.5 62.45V68.32M671.5 62.42V68.35M672.5 62.3V68.32M673.5 62.39V68.33M674.5 61.5V68.46M675.5 62.47V68.69M676.5 62.47V68.36M677.5 61.39V68.49M678.5 62.14V68.37M679.5 62.44V68.42M680.5 62.47V68.33M681.5 62.37V68.3M682.5 62.36V68.49M683.5 62.18V68.38M684.5 62.23V68.37M685.5 62.46V68.41M686.5 62.36V68.46M687.5 61.86V68.37M688.5 62.27V68.47M689.5 62.35V68.33M690.5 62.15V68.55M691.5 62.1V68.44M692.5 61.98V68.44M693.5 62.22V68.37M694.5 62.4V68.42M695.5 62.47V68.37M696.5 62.09V68.45M697.5 62.23V68.33M698.5 62.35V68.37M699.5 62.24V68.36M700.5 62.2V68.62M701.5 62.45V68.43M702.5 62.09V68.36M703.5 62.32V68.74M704.5 62.49V68.39M705.5 62.45V68.48M706.5 61.74V68.39M707.5 62.47V68.4M708.5 62.29V68.45M709.5 62.31V68.42M710.5 62.02V68.39M711.5 62.36V68.65M712.5 62.44V68.44M713.5 62.37V68.47M714.5 62.46V68.8M715.5 62.38V68.31M716.5 62.41V68.36M717.5 62.5V68.37M718.5 62.35V68.44M719.5 62.38V68.34M720.5 62.43V68.46M721.5 61.74V68.39M722.5 62.43V68.49M723.5 62.37V68.33M724.5 62.46V68.48M725.5 62.05V68.42M726.5 62.33V68.4M727.5 62.43V68.7M728.5 62.38V68.42M729.5 62.04V68.5M730.5 62.33V68.34M731.5 62.29V68.32M732.5 62.02V68.35M733.5 61.99V68.34M734.5 62.37V68.34M735.5 62.35V68.32M736.5 62.5V68.45M737.5 62.41V68.33M738.5 62.4V68.38M739.5 62.35V68.42M740.5 62.21V68.35M741.5 61.79V68.53M742.5 62.48V68.51M743.5 61.86V68.48M744.5 62.46V68.51M745.5 62.23V68.3M746.5 62.5V68.66M747.5 62.21V68.33M748.5 62.47V68.32M749.5 62.43V68.48M750.5 62.39V68.32M751.5 61.87V68.49M752.5 62.45V68.57M753.5 62.25V68.48M754.5 62.2V68.57M755.5 62.08V68.52M756.5 62.44V68.44M757.5 62.3V68.46M758.5 62.34V68.56M759.5 62.28V68.34M760.5 62.43V68.32M761.5 62.32V68.31M762.5 62.33V68.32M763.5 62.32V68.38M764.5 62.29V68.54M765.5 62.5V68.52M766.5 62.33V68.4M767.5 62.2V68.52M768.5 62.37V68.37M769.5 61.63V68.31M770.5 62.23V68.42M771.5 62.49V68.41M772.5 62.19V68.62M773.5 62.39V68.78M774.5 62.31V68.38M775.5 61.88V68.3M776.5 62.16V68.42M777.5 62.39V68.54M778.5 62.38V68.38M779.5 62.3V68.48M780.5 62.44V68.37M781.5 62.35V68.4M782.5 62.03V68.34M783.5 62.03V68.36M784.5 62.31V68.34M785.5 62.31V68.74M786.5 62.21V68.49M787.5 62.39V68.35M788.5 62.4V68.41M789.5 62.23V68.48M790.5 62.49V68.45M791.5 61.91V68.39M792.5 62.49V68.34M793.5 62.5V68.33M794.5 61.81V68.41M795.5 62.21V68.49M796.5 61.85V68.41M797.5 62.24V68.42M798.5 62.18V68.41M799.5 62.19V68.33M800.5 62.2V68.37M801.5 62.11V68.31M802.5 62.45V68.3M803.5 62.1V68.59M804.5 62.21V68.36M805.5 62.03V68.49M806.5 62.28V68.34M807.5 62.4V68.37M808.5 62.4V68.37M809.5 62.22V68.63M810.5 62.48V68.4M811.5 62.49V68.32M812.5 62.05V68.4M813.5 61.82V68.37M814.5 62.5V68.36M815.5 62.26V68.63M816.5 61.43V68.38M817.5 62.36V68.31M818.5 62.22V68.33M819.5 62.46V68.3M820.5 62.5V68.44M821.5 62.46V68.71M822.5 62.48V68.54M823.5 62.46V68.3M824.5 62.16V68.33M825.5 62.14V68.32M826.5 62.49V68.48M827.5 62.16V68.53M828.5 62.15V68.31M829.5 62.23V68.45M830.5 62.33V68.62M831.5 62.42V68.7M832.5 62.16V68.3M833.5 62.5V68.43M834.5 62.04V68.31M835.5 62.4V68.46M836.5 62.45V68.54M837.5 62.32V68.31M838.5 62.38V68.4M839.5 62.34V68.44M840.5 62.46V68.49M841.5 62.38V68.42M842.5 62.23V68.36M843.5 62.37V68.49M844.5 61.72V68.48M845.5 62.27V68.34M846.5 62.48V68.74M847.5 62.17V68.51M848.5 62.39V68.41M849.5 61.48V68.51M850.5 62.25V68.34M851.5 62.35V68.56M852.5 62.37V68.44M853.5 62.25V68.57M854.5 62.06V68.34M855.5 62.5V68.34M856.5 62.35V68.41M857.5 62.04V68.56M858.5 62.49V68.51M859.5 62.05V68.54M860.5 62.27V68.34M861.5 61.99V68.5M862.5 62.19V68.59M863.5 62.38V68.31M864.5 62.28V68.49M865.5 62.44V68.47M866.5 61.78V68.33M867.5 62.25V68.44M868.5 62.33V68.33M869.5 62.42V68.47M870.5 62.08V68.37M871.5 62.48V68.5M872.5 62.1V68.33M873.5 62.27V68.57M874.5 61.92V68.39M875.5 62.33V68.41M876.5 62.44V68.33M877.5 62.45V68.44M878.5 62.38V68.4M879.5 62.36V68.39M880.5 62.46V68.31M881.5 60.92V68.36M882.5 62.47V68.42M883.5 62.08V68.32M884.5 62.25V68.35M885.5 62.3V68.3M886.5 62.49V68.86M887.5 61.96V68.38M888.5 62.27V68.34M889.5 62.09V68.37M890.5 61.71V68.47M891.5 62.04V68.7M892.5 62.42V68.3M893.5 62.44V68.32M894.5 62.48V68.31M895.5 62.28V68.55M896.5 62.33V68.65M897.5 61.85V68.31M898.5 62.25V68.36M899.5 62.47V68.68M900.5 62.42V68.4M901.5 62.22V68.68M902.5 62.2V68.36M903.5 62.34V68.32M904.5 61.59V68.88M905.5 62.43V68.3M906.5 62.42V68.35M907.5 61.87V68.58M908.5 62.01V68.31M909.5 62.08V68.45M910.5 62.22V68.81M911.5 62.48V68.32M912.5 62.12V68.64M913.5 62.19V68.34M914.5 62.26V68.47M915.5 62.47V68.35M916.5 62.42V68.32M917.5 62.32V68.32M918.5 62.43V68.32M919.5 62.19V68.3M920.5 62.16V68.33M921.5 62.49V68.62M922.5 62.43V68.63M923.5 61.96V68.56M924.5 62.46V68.37M925.5 62.47V68.62M926.5 62V68.42M927.5 62.34V68.35M928.5 62.03V68.38M929.5 62.23V68.32M930.5 62.43V68.31M931.5 62.16V68.4M932.5 62.46V68.55M933.5 62.42V68.36M934.5 62.45V68.34M935.5 62.01V68.35M936.5 62.45V68.38M937.5 62.4V68.58M938.5 62.47V68.76M939.5 62.48V68.57M940.5 62.2V68.33M941.5 62.32V68.34M942.5 62.42V68.33M943.5 62.38V68.87M944.5 60.81V68.61M945.5 62.47V68.34M946.5 61.89V68.31M947.5 62.15V68.34M948.5 61.46V68.3M949.5 62.06V68.35M950.5 62.46V68.3M951.5 62.02V68.39M952.5 62.44V68.37M953.5 61.84V68.33M954.5 62.27V68.32M955.5 62.45V68.48M956.5 62.16V68.33M957.5 62.48V68.31M958.5 62.25V68.38M959.5 62.41V68.33M960.5 62.24V68.45M961.5 62.05V68.4M962.5 62.44V68.31M963.5 62.14V68.36M964.5 62.15V68.31M965.5 62.05V68.35M966.5 62V68.54M967.5 62.32V68.3M968.5 61.85V68.38M969.5 61.94V68.34M970.5 62.44V68.51M971.5 62.38V68.32M972.5 62.37V68.41M973.5 62.5V68.39M974.5 62.34V68.39M975.5 62.47V68.45M976.5 62.04V68.54M977.5 62.4V68.45M978.5 62.37V68.47M979.5 62.48V68.55M980.5 61.67V68.38M981.5 62.31V68.39M982.5 62.29V68.3M983.5 61.58V68.33M984.5 62.45V68.31M985.5 62.42V68.5M986.5 62.49V68.31M987.5 62.18V68.33M988.5 62.5V68.41M989.5 62.27V68.39M990.5 62.17V68.31M991.5 61.95V68.45M992.5 62.49V68.32M993.5 62.32V68.38M994.5 62.41V68.32M995.5 62.36V68.32M996.5 62.26V68.54M997.5 62.46V68.4M998.5 62.13V68.32M999.5 62.03V68.63M1000.5 62.37V68.37M1001.5 62.01V68.39M1002.5 62.36V68.64M1003.5 62.09V68.35M1004.5 62.43V68.35M1005.5 62.35V68.78M1006.5 62.06V68.59M1007.5 62.04V68.53M1008.5 62.49V68.39M1009.5 61.64V68.63M1010.5 62.42V68.37M1011.5 62.23V68.35M1012.5 62.3V68.31M1013.5 62.35V68.38M1014.5 62.49V68.32M1015.5 61.56V68.48" stroke="#ff00ff" stroke-width="1.06" fill="none"/>
<path d="M416.9 140L417.3 100L417.8 62.5" stroke="#ff00ff" stroke-width="1.2" fill="none"/>
<path d="M17.5 140.49V145.58M18.5 140.65V146.14M19.5 140.58V145.12M20.5 140.75V145.25M21.5 140.73V145.25M22.5 140.78V146.34M23.5 140.75V145.24M24.5 140.79V145.37M25.5 140.45V145.26M26.5 140.85V145.6M27.5 140.88V145.53M28.5 140.43V145.45M29.5 140.85V145.4M30.5 140.79V145.18M31.5 140.88V145.17M32.5 140.85V145.35M33.5 140.85V145.23M34.5 140.89V145.48M35.5 140.63V145.55M36.5 140.77V145.6M37.5 140.87V145.69M38.5 140.81V145.48M39.5 140.76V145.4M40.5 140.84V145.23M41.5 140.86V145.44M42.5 140.83V145.52M43.5 140.9V145.31M44.5 140.6V145.23M45.5 140.78V145.42M46.5 140.85V147.2M47.5 140.85V145.81M48.5 140.87V145.13M49.5 140.59V145.38M50.5 140.89V145.34M51.5 140.81V145.74M52.5 140.88V145.22M53.5 140.42V145.74M54.5 140.87V145.3M55.5 140.83V145.64M56.5 140.76V146.01M57.5 140.64V145.45M58.5 140.7V145.75M59.5 140.69V145.41M60.5 140.67V145.69M61.5 140.53V145.17M62.5 140.59V145.1M63.5 140.68V145.52M64.5 140.8V146.68M65.5 140.77V145.36M66.5 140.67V146.09M67.5 140.76V145.33M68.5 140.81V145.39M69.5 140.71V145.27M70.5 140.83V145.49M71.5 140.83V145.29M72.5 140.67V146.01M73.5 140.8V145.38M74.5 140.87V145.27M75.5 140.88V145.51M76.5 140.77V145.14M77.5 140.52V145.29M78.5 140.62V145.97M79.5 140.42V145.21M80.5 140.82V146.26M81.5 140.9V145.12M82.5 140.78V145.43M83.5 140.52V145.81M84.5 140.78V148.17M85.5 140.79V145.45M86.5 140.73V145.34M87.5 140.83V145.53M88.5 140.84V146.52M89.5 140.73V145.46M90.5 140.88V145.33M91.5 140.82V145.5M92.5 140.77V146.12M93.5 140.4V145.42M94.5 140.81V145.57M95.5 140.07V145.3M96.5 140.79V145.91M97.5 140.87V145.28M98.5 140.32V145.94M99.5 140.79V145.16M100.5 140.56V145.66M101.5 140.64V147.32M102.5 140.57V145.36M103.5 140.87V145.26M104.5 140.79V145.44M105.5 140.87V145.2M106.5 140.75V145.54M107.5 140.83V147.54M108.5 140.75V145.12M109.5 140.82V145.84M110.5 140.85V145.66M111.5 140.9V145.27M112.5 140.62V145.52M113.5 140.73V145.21M114.5 140.8V145.49M115.5 140.85V145.6M116.5 140.79V147.91M117.5 140.77V145.35M118.5 140.88V145.18M119.5 140.69V145.15M120.5 140.88V145.19M121.5 140.79V145.93M122.5 140.76V145.89M123.5 140.89V145.11M124.5 140.68V145.29M125.5 140.71V145.31M126.5 140.87V145.25M127.5 140.88V146.22M128.5 140.77V145.31M129.5 140.81V145.33M130.5 140.89V146.16M131.5 140.77V146.64M132.5 140.81V145.56M133.5 140.86V145.12M134.5 140.5V146.03M135.5 140.84V146.2M136.5 140.65V145.27M137.5 140.76V146.65M138.5 140.8V146.54M139.5 140.86V145.34M140.5 140.71V145.22M141.5 140.84V146.1M142.5 140.8V145.86M143.5 140.86V145.19M144.5 140.83V145.2M145.5 140.37V145.26M146.5 140.78V145.16M147.5 140.79V145.33M148.5 140.82V145.13M149.5 140.88V145.94M150.5 140.84V145.23M151.5 140.87V145.26M152.5 140.86V145.12M153.5 140.74V145.3M154.5 140.87V145.69M155.5 140.89V145.25M156.5 140.63V145.17M157.5 140.81V145.97M158.5 140.65V145.18M159.5 140.83V145.72M160.5 140.83V146.63M161.5 140.87V146.55M162.5 140.79V145.22M163.5 140.81V145.17M164.5 140.72V145.25M165.5 140.56V145.53M166.5 140.83V145.24M167.5 140.76V145.21M168.5 140.59V145.16M169.5 140.79V145.48M170.5 140.85V145.81M171.5 140.83V145.61M172.5 140.77V145.28M173.5 140.83V145.14M174.5 140.87V146.01M175.5 140.84V145.62M176.5 140.88V145.5M177.5 140.83V145.43M178.5 140.85V145.13M179.5 140.84V145.22M180.5 140.88V145.71M181.5 140.85V145.35M182.5 140.54V145.82M183.5 140.58V146.05M184.5 140.88V145.26M185.5 140.9V145.65M186.5 140.74V145.31M187.5 140.82V145.62M188.5 140.72V145.24M189.5 140.62V145.31M190.5 140.75V145.2M191.5 140.88V146.27M192.5 140.7V145.7M193.5 140.89V145.12M194.5 140.87V145.21M195.5 140.85V145.33M196.5 140.89V145.28M197.5 140.75V145.2M198.5 140.63V145.51M199.5 140.71V145.24M200.5 140.81V145.65M201.5 140.84V145.1M202.5 140.63V145.82M203.5 140.85V145.12M204.5 140.61V145.55M205.5 140.89V145.23M206.5 140.88V145.85M207.5 140.86V146.28M208.5 140.69V145.14M209.5 140.72V145.34M210.5 140.69V145.95M211.5 140.85V145.15M212.5 140.46V145.36M213.5 140.5V145.66M214.5 140.7V145.95M215.5 140.75V145.39M216.5 140.89V145.68M217.5 140.82V145.44M218.5 140.51V145.17M219.5 140.68V145.12M220.5 140.72V145.89M221.5 140.85V145.48M222.5 140.38V145.59M223.5 140.78V145.24M224.5 140.89V145.31M225.5 140.82V145.21M226.5 140.84V145.17M227.5 140.72V145.63M228.5 140.86V145.23M229.5 140.79V145.38M230.5 140.49V145.31M231.5 140.85V146.14M232.5 140.88V145.5M233.5 140.84V145.91M234.5 140.78V145.79M235.5 140.87V145.63M236.5 140.76V145.4M237.5 140.68V145.95M238.5 140.88V145.26M239.5 140.83V145.21M240.5 140.89V145.26M241.5 140.87V145.68M242.5 140.81V145.16M243.5 140.84V145.4M244.5 140.83V145.19M245.5 140.89V145.11M246.5 140.17V145.77M247.5 140.89V145.71M248.5 140.31V145.5M249.5 140.88V145.42M250.5 140.81V145.2M251.5 140.78V145.1M252.5 140.52V145.6M253.5 140.75V146.41M254.5 140.74V145.24M255.5 140.86V145.17M256.5 140.9V145.81M257.5 140.63V145.27M258.5 140.87V145.59M259.5 140.62V146.35M260.5 140.87V145.84M261.5 140.63V145.75M262.5 140.84V145.2M263.5 140.64V145.29M264.5 140.83V145.48M265.5 140.83V145.95M266.5 140.86V145.12M267.5 140.77V145.57M268.5 140.64V145.69M269.5 140.55V146.49M270.5 140.8V145.43M271.5 140.87V145.27M272.5 140.77V145.14M273.5 140.73V145.19M274.5 140.81V146.78M275.5 140.89V145.12M276.5 140.81V145.2M277.5 140.71V145.1M278.5 140.62V146.03M279.5 140.67V145.37M280.5 140.85V145.62M281.5 140.79V145.36M282.5 140.84V145.38M283.5 140.74V145.94M284.5 140.55V145.19M285.5 140.85V145.38M286.5 140.78V145.31M287.5 140.87V145.14M288.5 140.84V145.4M289.5 140.37V146.25M290.5 140.6V146.86M291.5 140.41V145.56M292.5 140.65V145.13M293.5 140.73V145.55M294.5 140.85V145.51M295.5 140.44V145.41M296.5 140.74V145.27M297.5 140.84V146.14M298.5 140.9V145.2M299.5 140.73V145.38M300.5 140.89V145.62M301.5 140.83V145.52M302.5 140.82V145.46M303.5 140.78V145.34M304.5 140.88V145.2M305.5 140.57V145.48M306.5 140.88V146.05M307.5 140.86V145.15M308.5 140.79V145.24M309.5 140.8V145.49M310.5 140.86V145.51M311.5 140.88V145.45M312.5 140.77V145.14M313.5 140.82V145.14M314.5 140.81V146.06M315.5 140.78V145.7M316.5 140.69V145.16M317.5 140.2V145.71M318.5 140.88V145.95M319.5 140.83V145.19M320.5 140.42V145.5M321.5 140.68V145.17M322.5 140.68V145.13M323.5 140.86V145.32M324.5 140.9V145.53M325.5 140.86V145.27M326.5 140.72V145.37M327.5 140.57V145.57M328.5 140.59V145.5M329.5 140.53V146.08M330.5 140.87V145.76M331.5 140.84V145.79M332.5 140.73V145.94M333.5 140.88V145.32M334.5 140.7V146.52M335.5 140.71V145.12M336.5 140.76V145.15M337.5 140.78V145.88M338.5 140.88V146.35M339.5 140.73V145.24M340.5 140.87V145.38M341.5 140.63V145.52M342.5 140.88V145.11M343.5 140.88V145.87M344.5 140.87V145.49M345.5 140.85V145.66M346.5 140.83V145.17M347.5 140.59V145.47M348.5 140.72V145.89M349.5 140.45V145.11M350.5 140.84V145.18M351.5 140.8V146.09M352.5 140.66V145.12M353.5 140.87V145.92M354.5 140.73V145.34M355.5 140.8V145.18M356.5 140.62V145.34M357.5 140.59V145.55M358.5 140.89V145.29M359.5 140.86V146.18M360.5 140.77V145.12M361.5 140.87V145.31M362.5 140.81V145.51M363.5 140.83V145.31M364.5 140.9V145.52M365.5 140.84V145.11M366.5 140.81V147.16M367.5 140.89V145.18M368.5 140.73V145.25M369.5 140.85V145.43M370.5 140.85V145.5M371.5 140.79V146.61M372.5 140.17V145.12M373.5 140.78V145.81M374.5 140.59V145.81M375.5 140.75V145.58M376.5 140.83V145.26M377.5 140.66V146.09M378.5 140.48V145.65M379.5 140.85V145.79M380.5 140.7V145.44M381.5 140.75V145.31M382.5 140.78V145.35M383.5 140.89V145.3M384.5 140.84V147.24M385.5 140.8V145.32M386.5 140.86V145.23M387.5 140.84V145.17M388.5 140.9V146.08M389.5 140.81V145.38M390.5 140.77V145.27M391.5 140.87V145.13M392.5 140.85V145.28M393.5 140.71V145.48M394.5 140.48V145.3M395.5 139.92V145.52M396.5 139.69V144.59M397.5 138.77V146M398.5 137.83V143.81M399.5 136.82V143.07M400.5 135.97V141.42M401.5 134.81V140.34M402.5 134.27V139.36M403.5 133.61V138.67M404.5 132.92V137.95M405.5 132.49V137.41M406.5 132.03V137.72M407.5 131.76V136.48M408.5 131.46V137.7M409.5 131.26V135.9M410.5 131.15V136.6M411.5 131.34V135.67M412.5 131.37V135.97M413.5 131.09V136.09M414.5 131.02V135.71M415.5 131.34V136.26M418.5 71.75V73.93M419.5 71.75V73.89M420.5 71.8V73.94M421.5 71.8V74.14M422.5 71.78V74.01M423.5 71.76V73.83M424.5 71.77V73.71M425.5 71.68V74.07M426.5 71.6V73.73M427.5 71.76V74.28M428.5 71.78V73.74M429.5 71.79V73.77M430.5 71.73V73.74M431.5 71.72V73.95M432.5 71.77V74.1M433.5 71.76V74.18M434.5 71.76V73.88M435.5 71.74V73.83M436.5 71.74V74.35M437.5 71.73V73.87M438.5 71.73V75.41M439.5 71.77V73.85M440.5 71.77V74.97M441.5 71.79V73.7M442.5 71.77V74.18M443.5 71.73V73.9M444.5 71.59V73.82M445.5 71.74V73.74M446.5 71.8V73.76M447.5 71.8V74.01M448.5 71.76V73.79M449.5 71.67V73.9M450.5 71.79V73.79M451.5 71.74V74.84M452.5 71.79V73.71M453.5 71.73V73.83M454.5 71.62V74.01M455.5 71.75V73.89M456.5 71.73V73.98M457.5 71.78V74.75M458.5 71.79V74.29M459.5 71.8V74.17M460.5 71.78V74.6M461.5 71.8V74.07M462.5 71.78V74.83M463.5 71.67V74.14M464.5 71.79V73.83M465.5 71.79V73.96M466.5 71.79V73.8M467.5 71.74V74.16M468.5 71.78V76.03M469.5 71.79V74.08M470.5 71.79V74.59M471.5 71.71V73.84M472.5 71.74V74.48M473.5 71.79V73.88M474.5 71.77V74.7M475.5 71.79V74.22M476.5 71.76V73.97M477.5 71.76V74.66M478.5 71.79V74.67M479.5 71.78V74.38M480.5 71.71V73.79M481.5 71.71V76.07M482.5 71.78V73.71M483.5 71.79V75.35M484.5 71.8V74.79M485.5 71.79V74.3M486.5 71.8V73.78M487.5 71.75V73.74M488.5 71.78V74.83M489.5 71.74V74.66M490.5 71.62V73.72M491.5 71.79V74.41M492.5 71.75V73.72M493.5 71.77V73.82M494.5 71.77V73.75M495.5 71.8V75.81M496.5 71.78V74.65M497.5 71.79V74M498.5 71.79V73.95M499.5 71.79V74.22M500.5 71.79V74.3M501.5 71.77V73.75M502.5 71.78V74.01M503.5 71.69V73.89M504.5 71.79V75.24M505.5 71.7V74.29M506.5 71.79V73.79M507.5 71.79V73.73M508.5 71.8V74.02M509.5 71.78V74.07M510.5 71.78V73.7M511.5 71.75V74.18M512.5 71.76V74.06M513.5 71.75V75.52M514.5 71.71V74.27M515.5 71.78V73.87M516.5 71.78V75.32M517.5 71.78V73.92M518.5 71.78V73.77M519.5 71.51V73.7M520.5 71.76V74.87M521.5 71.79V74.12M522.5 71.78V73.82M523.5 71.79V73.76M524.5 71.72V74.39M525.5 71.69V73.72M526.5 71.75V73.88M527.5 71.75V74.06M528.5 71.78V75.3M529.5 71.8V74.32M530.5 71.71V74.02M531.5 71.76V76.06M532.5 71.79V74.15M533.5 71.74V73.91M534.5 71.74V73.93M535.5 71.77V74.13M536.5 71.75V73.87M537.5 71.76V74.05M538.5 71.79V74.13M539.5 71.79V74.78M540.5 71.77V74.28M541.5 71.77V73.99M542.5 71.79V73.77M543.5 71.68V74.04M544.5 71.77V74.04M545.5 71.72V73.82M546.5 71.79V74.48M547.5 71.77V74.16M548.5 71.72V74.71M549.5 71.71V73.72M550.5 71.78V74.5M551.5 71.72V73.76M552.5 71.79V73.83M553.5 71.8V73.9M554.5 71.73V74.03M555.5 71.77V73.74M556.5 71.78V76.31M557.5 71.75V73.97M558.5 71.77V74.42M559.5 71.74V73.77M560.5 71.75V73.91M561.5 71.77V73.82M562.5 71.78V73.89M563.5 71.78V73.71M564.5 71.79V74.08M565.5 71.8V73.79M566.5 71.74V73.84M567.5 71.78V73.82M568.5 71.72V73.74M569.5 71.75V74.58M570.5 71.79V73.95M571.5 71.73V74.13M572.5 71.78V73.72M573.5 71.77V73.91M574.5 71.74V73.86M575.5 71.78V74.17M576.5 71.73V73.9M577.5 71.78V74.09M578.5 71.68V73.8M579.5 71.64V74.26M580.5 71.78V74.19M581.5 71.78V73.73M582.5 71.74V73.91M583.5 71.77V74.01M584.5 71.7V74.34M585.5 71.8V74.1M586.5 71.77V73.98M587.5 71.72V73.94M588.5 71.77V74.69M589.5 71.77V74M590.5 71.77V74.48M591.5 71.75V74.31M592.5 71.78V73.72M593.5 71.75V74.06M594.5 71.73V74.36M595.5 71.79V73.81M596.5 71.8V74.47M597.5 71.8V73.74M598.5 71.74V74.07M599.5 71.8V74.21M600.5 71.74V74M601.5 71.8V74.23M602.5 71.78V74.09M603.5 71.52V74.46M604.5 71.71V73.77M605.5 71.78V74.03M606.5 71.8V75.72M607.5 71.79V73.84M608.5 71.78V73.83M609.5 71.71V74.07M610.5 71.77V73.95M611.5 71.8V73.86M612.5 71.71V74.43M613.5 71.71V73.83M614.5 71.79V73.72M615.5 71.77V73.91M616.5 71.77V74M617.5 71.76V73.9M618.5 71.73V73.8M619.5 71.69V74.07M620.5 71.8V73.87M621.5 71.77V73.94M622.5 71.76V73.88M623.5 71.79V74.42M624.5 71.78V74.26M625.5 71.73V74.1M626.5 71.77V74.93M627.5 71.77V74.65M628.5 71.8V73.96M629.5 71.75V73.72M630.5 71.71V73.73M631.5 71.76V73.79M632.5 71.68V74.07M633.5 71.73V74.01M634.5 71.75V74.21M635.5 71.78V73.81M636.5 71.72V73.77M637.5 71.69V73.8M638.5 71.8V73.75M639.5 71.73V75.06M640.5 71.78V74.18M641.5 71.79V74.76M642.5 71.75V73.78M643.5 71.8V74.24M644.5 71.8V74.51M645.5 71.78V73.82M646.5 71.76V73.87M647.5 71.76V73.78M648.5 71.69V73.88M649.5 71.72V73.77M650.5 71.73V75.46M651.5 71.78V73.72M652.5 71.78V74.16M653.5 71.79V74.06M654.5 71.8V73.98M655.5 71.74V73.95M656.5 71.75V73.75M657.5 71.72V73.76M658.5 71.68V76.2M659.5 71.67V74.04M660.5 71.78V73.89M661.5 71.74V74.01M662.5 71.68V73.74M663.5 71.77V74.6M664.5 71.76V74.05M665.5 71.8V73.77M666.5 71.79V74.71M667.5 71.72V73.82M668.5 71.68V73.71M669.5 71.76V75.24M670.5 71.78V75M671.5 71.75V73.72M672.5 71.78V73.97M673.5 71.79V74.31M674.5 71.79V74.4M675.5 71.78V73.73M676.5 71.76V73.75M677.5 71.76V74.4M678.5 71.76V73.98M679.5 71.8V74.02M680.5 71.8V74.17M681.5 71.79V74.09M682.5 71.78V73.91M683.5 71.75V73.78M684.5 71.79V74.98M685.5 71.78V74.53M686.5 71.71V73.99M687.5 71.79V73.74M688.5 71.7V73.76M689.5 71.77V74.05M690.5 71.79V73.98M691.5 71.79V74.05M692.5 71.77V73.91M693.5 71.79V73.93M694.5 71.79V73.76M695.5 71.79V74.62M696.5 71.77V74.7M697.5 71.8V74.99M698.5 71.77V74.4M699.5 71.76V74.23M700.5 71.79V74.32M701.5 71.79V73.84M702.5 71.8V73.92M703.5 71.77V73.86M704.5 71.7V73.74M705.5 71.76V73.82M706.5 71.76V74.39M707.5 71.74V73.73M708.5 71.79V74.11M709.5 71.62V73.72M710.5 71.76V74.23M711.5 71.72V73.89M712.5 71.73V73.98M713.5 71.69V73.7M714.5 71.67V73.94M715.5 71.78V73.74M716.5 71.79V74.3M717.5 71.75V73.77M718.5 71.78V73.77M719.5 71.79V73.81M720.5 71.78V75.38M721.5 71.53V74.41M722.5 71.77V74.01M723.5 71.73V74.77M724.5 71.74V74.16M725.5 71.79V74.14M726.5 71.72V74.4M727.5 71.8V74.27M728.5 71.78V73.78M729.5 71.65V74.2M730.5 71.74V73.77M731.5 71.72V74.95M732.5 71.69V74.31M733.5 71.72V74.43M734.5 71.76V73.96M735.5 71.72V74.39M736.5 71.71V73.86M737.5 71.65V74.04M738.5 71.67V73.76M739.5 71.64V74.4M740.5 71.79V74.52M741.5 71.79V73.8M742.5 71.77V73.82M743.5 71.77V74.77M744.5 71.75V74.26M745.5 71.78V74.39M746.5 71.73V74.22M747.5 71.67V74.49M748.5 71.78V73.74M749.5 71.75V74.51M750.5 71.78V74.11M751.5 71.72V74.41M752.5 71.8V74M753.5 71.8V73.75M754.5 71.72V73.94M755.5 71.76V73.98M756.5 71.78V73.81M757.5 71.78V74.54M758.5 71.76V73.86M759.5 71.8V73.84M760.5 71.75V73.96M761.5 71.75V74.44M762.5 71.79V74.22M763.5 71.8V74.48M764.5 71.79V73.84M765.5 71.66V73.9M766.5 71.79V74.69M767.5 71.76V74.71M768.5 71.78V74.01M769.5 71.66V74.02M770.5 71.6V73.79M771.5 71.72V73.78M772.5 71.77V73.7M773.5 71.79V75.01M774.5 71.77V74.45M775.5 71.79V73.9M776.5 71.8V74.06M777.5 71.71V74.02M778.5 71.78V74.89M779.5 71.7V74.19M780.5 71.8V74.14M781.5 71.77V75.12M782.5 71.78V74.19M783.5 71.76V73.91M784.5 71.77V74.21M785.5 71.69V74.01M786.5 71.78V75.38M787.5 71.8V74.51M788.5 71.75V74.07M789.5 71.77V74.33M790.5 71.7V74.29M791.5 71.74V73.72M792.5 71.78V73.77M793.5 71.66V74.7M794.5 71.79V74.1M795.5 71.76V73.72M796.5 71.78V74.32M797.5 71.75V73.85M798.5 71.74V73.85M799.5 71.76V73.95M800.5 71.63V74.17M801.5 71.73V74.21M802.5 71.78V75.18M803.5 71.74V74.23M804.5 71.79V73.78M805.5 71.76V74.49M806.5 71.73V73.89M807.5 71.79V74.03M808.5 71.71V73.78M809.5 71.74V73.78M810.5 71.78V73.72M811.5 71.78V73.92M812.5 71.65V75.17M813.5 71.79V73.87M814.5 71.67V73.8M815.5 71.78V73.96M816.5 71.79V73.84M817.5 71.78V73.92M818.5 71.65V73.84M819.5 71.79V74.78M820.5 71.77V74.52M821.5 71.75V74.38M822.5 71.78V73.77M823.5 71.74V73.99M824.5 71.76V74.2M825.5 71.74V73.84M826.5 71.78V74.82M827.5 71.77V73.85M828.5 71.76V73.84M829.5 71.73V73.72M830.5 71.72V74.08M831.5 71.78V74.97M832.5 71.79V73.83M833.5 71.8V74.06M834.5 71.74V74.21M835.5 71.78V74.44M836.5 71.79V73.86M837.5 71.75V75.24M838.5 71.75V74.23M839.5 71.73V73.93M840.5 71.67V74.31M841.5 71.78V73.92M842.5 71.73V73.89M843.5 71.79V74.62M844.5 71.77V74.03M845.5 71.75V74.74M846.5 71.79V73.89M847.5 71.8V73.94M848.5 71.77V74.56M849.5 71.75V74.09M850.5 71.78V74.08M851.5 71.79V74.54M852.5 71.73V74.52M853.5 71.79V74.2M854.5 71.74V74.01M855.5 71.7V74.73M856.5 71.74V74.47M857.5 71.75V74.65M858.5 71.79V74.25M859.5 71.75V74.13M860.5 71.79V73.73M861.5 71.76V74.48M862.5 71.79V73.81M863.5 71.79V73.74M864.5 71.75V75.36M865.5 71.73V73.9M866.5 71.75V73.73M867.5 71.72V73.88M868.5 71.8V74.15M869.5 71.79V73.84M870.5 71.8V73.97M871.5 71.76V74.44M872.5 71.8V74.49M873.5 71.79V73.81M874.5 71.76V73.89M875.5 71.78V74.08M876.5 71.79V74.41M877.5 71.79V74.52M878.5 71.73V74.05M879.5 71.8V74.38M880.5 71.8V74.02M881.5 71.78V73.73M882.5 71.76V74.28M883.5 71.76V73.93M884.5 71.77V74.1M885.5 71.79V74.61M886.5 71.55V74.43M887.5 71.65V73.88M888.5 71.61V73.73M889.5 71.77V73.76M890.5 71.77V74.22M891.5 71.74V73.97M892.5 71.78V73.79M893.5 71.78V73.85M894.5 71.79V74.3M895.5 71.77V73.96M896.5 71.79V74.25M897.5 71.79V73.84M898.5 71.76V74.24M899.5 71.64V74.32M900.5 71.67V74.84M901.5 71.74V74.27M902.5 71.8V73.8M903.5 71.8V74.6M904.5 71.74V74.15M905.5 71.79V73.9M906.5 71.79V74.15M907.5 71.59V73.86M908.5 71.8V73.79M909.5 71.78V74.73M910.5 71.73V73.97M911.5 71.8V73.75M912.5 71.79V74.38M913.5 71.77V75.8M914.5 71.69V74.41M915.5 71.77V74.48M916.5 71.79V73.75M917.5 71.76V74.02M918.5 71.79V73.83M919.5 71.8V74.78M920.5 71.74V75.01M921.5 71.62V73.96M922.5 71.74V73.92M923.5 71.72V74.53M924.5 71.79V73.71M925.5 71.79V74.1M926.5 71.78V73.7M927.5 71.72V74.39M928.5 71.77V73.72M929.5 71.7V74.04M930.5 71.8V73.88M931.5 71.76V74.67M932.5 71.77V74.16M933.5 71.79V73.83M934.5 71.69V73.92M935.5 71.8V74.1M936.5 71.79V73.8M937.5 71.77V74.1M938.5 71.75V74.25M939.5 71.77V73.73M940.5 71.74V73.72M941.5 71.77V73.93M942.5 71.75V74.26M943.5 71.79V74.17M944.5 71.75V73.99M945.5 71.79V74.78M946.5 71.76V73.73M947.5 71.79V75.65M948.5 71.79V73.92M949.5 71.73V74.48M950.5 71.75V74.31M951.5 71.8V73.74M952.5 71.63V74.43M953.5 71.8V73.72M954.5 71.79V74.9M955.5 71.79V74.2M956.5 71.68V74.16M957.5 71.69V73.84M958.5 71.79V73.71M959.5 71.74V73.75M960.5 71.64V74.26M961.5 71.79V74.44M962.5 71.79V74.02M963.5 71.79V74.4M964.5 71.7V74.82M965.5 71.8V74.56M966.5 71.76V74.48M967.5 71.77V74.14M968.5 71.76V74.42M969.5 71.8V73.73M970.5 71.76V73.85M971.5 71.78V73.7M972.5 71.74V73.71M973.5 71.72V74.45M974.5 71.77V73.76M975.5 71.75V73.8M976.5 71.77V73.75M977.5 71.63V74.06M978.5 71.78V73.74M979.5 71.74V74.55M980.5 71.72V73.75M981.5 71.78V73.86M982.5 71.74V73.77M983.5 71.76V75.43M984.5 71.73V73.7M985.5 71.8V73.75M986.5 71.75V74.11M987.5 71.77V73.97M988.5 71.78V74.12M989.5 71.75V74.82M990.5 71.74V74.42M991.5 71.69V74.52M992.5 71.74V73.71M993.5 71.75V74.55M994.5 71.77V74.65M995.5 71.79V74.99M996.5 71.77V74.25M997.5 71.79V73.86M998.5 71.78V73.88M999.5 71.8V73.96M1000.5 71.62V74.18M1001.5 71.68V74.35M1002.5 71.72V76.02M1003.5 71.74V73.84M1004.5 71.79V73.94M1005.5 71.8V73.82M1006.5 71.7V74.84M1007.5 71.78V74.36M1008.5 71.73V74.69M1009.5 71.73V74.04M1010.5 71.8V74.49M1011.5 71.78V74.14M1012.5 71.78V74.05M1013.5 71.65V73.78M1014.5 71.77V74.17M1015.5 71.77V74.95" stroke="#ffff00" stroke-width="1.06" fill="none"/>
<path d="M415 133.5L415.8 125L416.8 100L418 72" stroke="#f0f000" stroke-width="1.2" fill="none"/>
<path d="M419.5 69.4H1016.5" stroke="#a8a000" stroke-width="0.9" fill="none"/>
<path d="M17.5 545.02V562.89M18.5 544.05V564.35M19.5 545.67V559.58M20.5 545.31V562.78M21.5 545.8V559.68M22.5 543.94V565.23M23.5 545.54V560.1M24.5 544.09V561M25.5 543.78V561.34M26.5 545.42V559.69M27.5 545.81V561.02M28.5 545.5V559.71M29.5 540.86V560.81M30.5 544.52V560.87M31.5 544.5V561.05M32.5 545.33V559.38M33.5 545.77V559.3M34.5 545.21V559.51M35.5 545.71V560.31M36.5 540.65V561.04M37.5 545.41V561.5M38.5 545.6V559.46M39.5 545.36V560.1M40.5 544.15V560.19M41.5 543.96V559.47M42.5 541.88V559.95M43.5 543.24V559.37M44.5 543.28V559.71M45.5 543.03V561.77M46.5 544.27V559.83M47.5 545.92V559.66M48.5 542.41V559.61M49.5 544.33V560.68M50.5 544.33V559.66M51.5 545.72V559.51M52.5 539.96V560.09M53.5 544.38V560.63M54.5 545.59V559.47M55.5 545.95V562.25M56.5 545.77V564.33M57.5 545.31V561.31M58.5 545.76V561.72M59.5 545.56V560.08M60.5 544.89V559.58M61.5 545.57V561.79M62.5 545.5V560.13M63.5 543.84V559.79M64.5 545.69V559.79M65.5 545.29V560.11M66.5 544.48V560.39M67.5 542.97V559.51M68.5 544.4V562.15M69.5 545.64V559.49M70.5 545.18V559.63M71.5 545.12V561.31M72.5 545.9V559.64M73.5 545.07V559.75M74.5 545.67V560.33M75.5 545.87V559.57M76.5 545.4V560.42M77.5 541.94V560.69M78.5 545.97V559.86M79.5 544.04V560.73M80.5 543.02V564.41M81.5 543.16V559.67M82.5 541.78V560.62M83.5 545.69V559.78M84.5 543.1V559.87M85.5 545.98V559.97M86.5 542.25V560.44M87.5 544.15V559.64M88.5 545.22V560.1M89.5 545.78V561.16M90.5 545.46V559.73M91.5 540.13V560.52M92.5 545.84V559.56M93.5 544.56V560.63M94.5 546.11V560.51M95.5 544.13V560.71M96.5 545.76V560.6M97.5 544.77V561.15M98.5 545.93V562.01M99.5 541.8V561.6M100.5 543.25V560.27M101.5 542.68V559.88M102.5 545.8V560.96M103.5 542.71V559.72M104.5 545.83V559.65M105.5 545.33V559.83M106.5 545.88V561.68M107.5 544.89V563.82M108.5 545.44V561.32M109.5 546.2V564.07M110.5 545.82V560.6M111.5 545.15V564.07M112.5 545.21V565.63M113.5 544.78V560M114.5 543.54V559.98M115.5 540.24V560.56M116.5 545.86V564.53M117.5 545.67V560.44M118.5 545.62V561.32M119.5 546.22V560.37M120.5 546V562.31M121.5 546.27V561.08M122.5 545.83V560.59M123.5 545.04V561.55M124.5 546.06V560.1M125.5 546.09V564.53M126.5 546.05V559.92M127.5 545.19V561.01M128.5 543.04V559.79M129.5 545.9V559.98M130.5 544.99V560.62M131.5 545.52V563.01M132.5 544.69V562.67M133.5 541.6V560.2M134.5 542.06V560.52M135.5 546.25V563.43M136.5 546.17V559.77M137.5 545.83V560.26M138.5 541.23V562.81M139.5 545.53V560.88M140.5 543.52V562.23M141.5 544.77V560.84M142.5 546.18V560.19M143.5 544.76V561.1M144.5 543.95V563.21M145.5 541.46V560.1M146.5 546.26V563.2M147.5 545.12V560.09M148.5 544.62V560.24M149.5 545.99V560.48M150.5 545.29V561.5M151.5 546.29V561.84M152.5 544.94V560.77M153.5 544.74V562.23M154.5 546.4V560.79M155.5 544.72V561.68M156.5 544.86V560.13M157.5 541.66V562.14M158.5 546.04V560.68M159.5 541.69V560.19M160.5 545.65V564.74M161.5 542.99V560.25M162.5 544.46V560.52M163.5 544.82V562.05M164.5 546.26V560.24M165.5 546.1V560.33M166.5 546.42V560.09M167.5 545.69V560.7M168.5 546.36V561.19M169.5 542.2V561.18M170.5 545.83V561.72M171.5 545.63V560.19M172.5 545.51V559.93M173.5 544.81V560.17M174.5 545.81V564.83M175.5 544.33V562.62M176.5 544.97V561.43M177.5 544.69V565.01M178.5 546.2V562.11M179.5 545.99V560.38M180.5 543.95V561.32M181.5 543.69V563.06M182.5 545.21V560.28M183.5 546.52V561.1M184.5 544.61V560.43M185.5 546.45V559.97M186.5 546.27V561.75M187.5 546.56V560.36M188.5 546.11V561.83M189.5 540.57V560.01M190.5 546.39V564.07M191.5 541.32V560.23M192.5 545.97V561.1M193.5 546.01V560.8M194.5 545.62V560.45M195.5 546.51V560.14M196.5 546.34V560.15M197.5 545.14V561.8M198.5 546.15V562.37M199.5 544.66V560.65M200.5 545.61V560.34M201.5 542.66V561.26M202.5 546.55V560.29M203.5 544.87V560.77M204.5 544.75V560.43M205.5 544.25V562.48M206.5 546.5V561.38M207.5 546.33V561.9M208.5 544.21V562.41M209.5 546.27V560.21M210.5 545.03V561.32M211.5 546.45V560.4M212.5 545.36V560.25M213.5 545.17V560.5M214.5 546.24V560.91M215.5 545.55V562.03M216.5 546.65V562.03M217.5 546.32V560.62M218.5 545.17V561.87M219.5 545.28V563.59M220.5 546.37V560.67M221.5 545.09V560.57M222.5 546.46V560.51M223.5 544.51V562.76M224.5 544.84V564.91M225.5 544.36V560.69M226.5 546.17V562.06M227.5 546.66V561.56M228.5 546.61V560.23M229.5 545.67V560.4M230.5 542.73V563.31M231.5 545.83V560.49M232.5 546.57V561.23M233.5 545.66V560.85M234.5 544.88V561.31M235.5 544.54V560.35M236.5 546.67V560.92M237.5 545.8V560.63M238.5 545.13V560.57M239.5 546.22V561.17M240.5 544.91V562.41M241.5 546.06V561.07M242.5 542.8V564.24M243.5 545.27V560.31M244.5 545.79V561.64M245.5 546.19V560.16M246.5 540.7V563.69M247.5 546.43V561M248.5 545.17V560.57M249.5 546.49V562.1M250.5 544.37V560.86M251.5 546.43V560.73M252.5 546.39V564.93M253.5 546.44V560.45M254.5 544.31V560.14M255.5 546.31V560.01M256.5 546.19V561.02M257.5 543.75V560.14M258.5 546.13V562.01M259.5 545.57V560.44M260.5 546.18V560.22M261.5 541.01V559.97M262.5 545.89V561.78M263.5 542.99V563.26M264.5 545.34V564.42M265.5 544.89V560.21M266.5 545.32V561.57M267.5 544.25V559.87M268.5 545.9V564.4M269.5 546.03V562.14M270.5 545.56V560.03M271.5 545.72V560.53M272.5 540.14V559.8M273.5 543.23V560.12M274.5 545.82V561.57M275.5 545.45V559.81M276.5 545.25V562.07M277.5 543.06V560.74M278.5 546V561.6M279.5 544.6V562.86M280.5 541.42V559.99M281.5 543.13V561.94M282.5 545.48V560.04M283.5 545.22V559.99M284.5 545.19V559.5M285.5 545.49V562.9M286.5 545.07V560.8M287.5 542.57V561.37M288.5 545.4V563.02M289.5 543.35V565.22M290.5 543.79V561.31M291.5 543.17V559.58M292.5 544.03V559.8M293.5 542.82V559.24M294.5 544.35V559.58M295.5 542.88V559.55M296.5 542.61V561.68M297.5 542.17V559.02M298.5 541.1V560.78M299.5 543.53V560.27M300.5 545.09V561.69M301.5 543.92V559.48M302.5 544.43V560.8M303.5 542.71V561.51M304.5 544.57V559.02M305.5 544.45V558.49M306.5 544.22V558.32M307.5 542.37V558.61M308.5 544.59V558.27M309.5 542.62V558.44M310.5 543.66V558.82M311.5 542.1V562.61M312.5 543.92V559.43M313.5 541.04V558.83M314.5 540.91V559.8M315.5 543.74V560.86M316.5 542.93V557.87M317.5 542.79V560.26M318.5 542.93V558.51M319.5 543.13V560.61M320.5 542.2V557.68M321.5 543.08V557.92M322.5 538.88V558.94M323.5 543.37V560.74M324.5 543.42V558.31M325.5 542.53V558.77M326.5 542.45V556.93M327.5 542.09V559.27M328.5 540.78V557.26M329.5 542.64V558.56M330.5 540.5V556.79M331.5 539.61V562.33M332.5 541.89V556.95M333.5 540.79V560.13M334.5 542.22V556.59M335.5 541.87V557.93M336.5 542.06V557.05M337.5 541.24V557.43M338.5 541.96V560.39M339.5 536.1V556.83M340.5 539.56V555.8M341.5 538.16V556.54M342.5 539.48V558.22M343.5 540.79V558.89M344.5 540.95V554.9M345.5 540.09V558.13M346.5 537.52V559.19M347.5 539.75V558.43M348.5 539.43V554.45M349.5 539V556.5M350.5 539.51V555.28M351.5 539.73V554.22M352.5 539.2V554.66M353.5 538.91V553.57M354.5 539.69V553.88M355.5 537.65V555.17M356.5 538.97V553.38M357.5 538.13V553.07M358.5 537.67V556.14M359.5 538.56V553.78M360.5 536.83V554.37M361.5 536.71V554M362.5 537.94V554.71M363.5 534.37V551.9M364.5 533.77V552.54M365.5 537.78V551.61M366.5 535.34V553.01M367.5 537.32V552.06M368.5 535.84V556.95M369.5 536.57V552.95M370.5 536.57V550.91M371.5 536.55V551.19M372.5 535.18V550.75M373.5 536.18V550.4M374.5 536.13V550.17M375.5 535.51V550.71M376.5 535.59V550.46M377.5 534.84V554.71M378.5 534.52V553.45M379.5 534.38V549.25M380.5 533.81V548.97M381.5 534.69V548.67M382.5 532.98V553.49M383.5 533.83V548.84M384.5 533.59V548.65M385.5 532.48V548.57M386.5 533.8V550.63M387.5 532.59V547.46M388.5 530.84V549.22M389.5 532.84V548.58M390.5 529.45V547.67M391.5 532.13V547.17M392.5 531.5V548.01M393.5 530.46V550.59M394.5 531.96V546.54M395.5 529.07V547.94M396.5 530.33V547.03M397.5 530.78V549.42M398.5 529.95V545.58M399.5 530.58V544.73M400.5 527.21V546.7M401.5 530.32V544.61M402.5 529.12V544.79M403.5 529.16V546.88M404.5 528.93V544.38M405.5 525.34V544.51M406.5 528.08V543.32M407.5 528.06V543.86M408.5 526.22V542.65M409.5 527.58V542.67M410.5 527.33V545.33M411.5 526.58V541.89M412.5 526.88V543.73M413.5 526.96V542.64M414.5 526.93V540.94M415.5 526.61V542.82M416.5 526.2V540.49M417.5 526.08V540.29M418.5 523.92V541.48M419.5 522.02V543.7M420.5 524.17V542.86M421.5 524.96V542.65M422.5 523.98V538.82M423.5 522.5V541.17M424.5 523.57V538.11M425.5 520.94V539.8M426.5 522.4V543.08M427.5 523.44V537.25M428.5 523.03V536.93M429.5 521.12V538.13M430.5 522.52V536.63M431.5 522.13V537.51M432.5 520.49V541.07M433.5 521.23V541.36M434.5 520.78V536.04M435.5 520.93V535.43M436.5 515.59V540.77M437.5 519V534.79M438.5 520.27V534.48M439.5 519.65V535.97M440.5 519.87V534.83M441.5 517.91V533.41M442.5 518.41V535.37M443.5 517.65V533.58M444.5 515.4V533.72M445.5 517.64V532.76M446.5 513.61V534.6M447.5 513.89V532.55M448.5 517.01V531.27M449.5 516.17V532.4M450.5 516.55V532.73M451.5 513.91V531.04M452.5 515.87V532.02M453.5 514.74V530.94M454.5 513.93V530.9M455.5 514.07V533.43M456.5 509.85V532.23M457.5 512.75V528.49M458.5 513.13V528.05M459.5 509.99V529.6M460.5 510.83V529.48M461.5 506.82V528.31M462.5 511.91V528.35M463.5 511.68V527.3M464.5 511.54V528.46M465.5 510.41V525.68M466.5 507.2V524.95M467.5 506.67V526.56M468.5 510.04V526.21M469.5 508.62V527.25M470.5 508.2V524.14M471.5 505.08V523.06M472.5 506.51V522.7M473.5 507.89V522.34M474.5 504.92V522.65M475.5 505.68V521.84M476.5 505.27V522.59M477.5 506.71V521.66M478.5 504.56V520.62M479.5 504.51V520.37M480.5 505.03V523.29M481.5 501.04V525.12M482.5 504.13V520.01M483.5 502.1V520.49M484.5 503.29V520.97M485.5 503.05V522.09M486.5 502.48V517.41M487.5 500.99V517.07M488.5 500.97V516.54M489.5 496.3V517.25M490.5 499.54V515.91M491.5 499.31V515.68M492.5 499.67V516.76M493.5 499.32V514.47M494.5 498.5V515.63M495.5 494.54V512.09M496.5 496.23V512.25M497.5 494.53V512.53M498.5 495.07V513.88M499.5 494.66V509.32M500.5 491.7V508.56M501.5 493.19V508.67M502.5 492.15V507.17M503.5 488.05V507.13M504.5 488.99V505.87M505.5 487.27V505.07M506.5 487.01V505.75M507.5 484.88V506.17M508.5 488.33V504.73M509.5 486.56V504.1M510.5 488.92V506.53M511.5 486.25V504.2M512.5 486.29V502.51M513.5 487.04V504.34M514.5 482.69V505.22M515.5 486.97V502.73M516.5 485.65V501.41M517.5 486.21V500.48M518.5 485.17V500.91M519.5 485.28V500.21M520.5 484.17V501.3M521.5 483.67V499.05M522.5 481.38V499.1M523.5 479.45V504.04M524.5 483.67V498.98M525.5 478.42V498.03M526.5 481.97V497.49M527.5 482.75V496.9M528.5 482.22V496.69M529.5 480.56V497.06M530.5 477.34V497.18M531.5 480.84V499.66M532.5 479.73V496.09M533.5 477.99V496.3M534.5 480.03V495.76M535.5 479.89V499.32M536.5 479.74V499.24M537.5 479.79V493.57M538.5 478.41V493.64M539.5 478.29V493.21M540.5 476.36V494.41M541.5 477.08V496.4M542.5 472.54V493.91M543.5 476.4V491.94M544.5 477.92V492.5M545.5 472.52V491.96M546.5 476.2V491.14M547.5 476.38V494.35M548.5 475.58V493.2M549.5 476.63V490.66M550.5 476.08V492.73M551.5 475.95V493.81M552.5 475.37V492.7M553.5 474.48V489.83M554.5 470.21V489.75M555.5 473.26V488.8M556.5 472.14V494.41M557.5 474.37V490.26M558.5 473.83V488.19M559.5 473.37V489.33M560.5 469.2V493.45M561.5 467.55V488.66M562.5 471.71V487.21M567.5 343.55V362.47M568.5 345.69V365.65M569.5 346.73V363.04M570.5 347.93V363.37M571.5 347.34V366.16M572.5 348.97V365.25M573.5 348.43V365.96M574.5 349.45V366.42M575.5 350.78V365.69M576.5 350.34V366.42M577.5 349.4V366.83M578.5 349.29V367.23M579.5 352.25V368.21M580.5 351.74V367.84M581.5 349.94V367.29M582.5 350.17V369.41M583.5 350.66V367.39M584.5 347.29V367.44M585.5 350.69V365.81M586.5 350.57V366.03M587.5 350.25V366.73M588.5 349.24V365.38M589.5 348.68V368.8M590.5 349.06V364.46M591.5 348.63V364.51M592.5 345.15V365.51M593.5 347.73V363.58M594.5 348.23V363.2M595.5 345.07V364.33M596.5 347.43V363.93M597.5 347.31V363.2M598.5 346.46V361.97M599.5 344.69V363.47M600.5 345.69V361.49M601.5 345.07V362.09M602.5 345.11V361.35M603.5 343.17V361.21M604.5 346.41V361.99M605.5 346.46V361.34M606.5 344.99V367.2M607.5 346.16V361.68M608.5 345.07V361.59M609.5 346V363.02M610.5 345.47V361.46M611.5 345.79V361.97M612.5 339.45V364.24M613.5 344.84V360.94M614.5 343.51V359.74M615.5 342.37V360.02M616.5 341.07V359.04M617.5 338.97V360.68M618.5 341.75V357.84M619.5 341.27V357.36M620.5 340.11V358.56M621.5 340.17V362.14M622.5 341.06V357.88M623.5 338.22V355.72M624.5 339.74V355.23M625.5 338.6V356.75M626.5 338.9V356.21M627.5 338.47V355.91M628.5 338.28V359.54M629.5 337.5V353.2M630.5 337.99V354.82M631.5 334.76V354.12M632.5 337.36V355.49M633.5 335.39V352.21M634.5 336.35V353.5M635.5 336.83V351.57M636.5 335.9V354.48M637.5 330.32V351.58M638.5 332.33V353.12M639.5 332.68V351.84M640.5 330.01V351.8M641.5 330.48V351.11M642.5 334.38V350.56M643.5 333.34V349.68M644.5 333.28V349.77M645.5 332.28V348.67M646.5 332.79V348.97M647.5 331.86V348.35M648.5 330.9V347.44M649.5 331.06V347.24M650.5 329.61V348.23M651.5 329.18V347.1M652.5 330.72V349.58M653.5 329.7V345.93M654.5 329.92V345.61M655.5 328.2V347.06M656.5 328.72V346.07M657.5 329.01V344.6M658.5 328.34V343.85M659.5 327.98V345.05M660.5 326.29V342.88M661.5 327.54V344.48M662.5 325.98V343.47M663.5 325.7V343.17M664.5 326.39V341.09M665.5 325.89V340.66M666.5 321.31V341.39M667.5 324.26V345.06M668.5 323.17V339.98M669.5 324.69V339.43M670.5 322.61V340.92M671.5 323.68V339.27M672.5 323.9V339.24M673.5 322.2V341.28M674.5 320.92V340.58M675.5 322.57V338.03M676.5 322.56V342.34M677.5 322.51V336.79M678.5 322.01V340M679.5 319.34V336.46M680.5 319.04V338.81M681.5 320.73V335.5M682.5 319.05V335.54M683.5 320.75V337.95M684.5 319.77V334.91M685.5 318.98V334.26M686.5 319.97V334.21M687.5 318.98V333.16M688.5 318.69V334.91M689.5 318.47V334.14M690.5 317.37V332.43M691.5 318.53V333.49M692.5 316.93V332.08M693.5 317.73V334.12M694.5 314.31V331.41M695.5 316.27V331.99M696.5 316.74V330.52M697.5 316.49V331.69M698.5 315.47V330.95M699.5 316.37V329.98M700.5 315.76V330.15M701.5 315.38V332.47M702.5 315.6V334.84M703.5 315.11V331.39M704.5 314.84V329.59M705.5 314.3V328.1M706.5 312.41V330.2M707.5 314V329.69M708.5 313.25V333.26M709.5 313.85V327.69M710.5 313.29V328.15M711.5 311.22V329.14M712.5 311.99V326.91M713.5 310.55V326.1M714.5 312.18V327.7M715.5 311.51V331.41M716.5 311.97V326.05M717.5 311.52V324.91M718.5 311.49V324.81M719.5 310.72V325.25M720.5 310.12V324.69M721.5 309.16V325M722.5 304.86V323.98M723.5 309.4V324.46M724.5 309.52V326.1M725.5 309.61V326.04M726.5 309.07V323.35M727.5 308.09V323.72M728.5 308.75V322.4M729.5 304.49V322.7M730.5 308.58V323.35M731.5 307.42V322.13M732.5 307.7V324.02M733.5 307.44V321.86M734.5 303.24V321.49M735.5 306.81V320.85M736.5 305.74V321.94M737.5 306.22V320.87M738.5 306.46V322.14M739.5 305.71V322.23M740.5 305.68V321.32M741.5 306.08V319.52M742.5 301.19V320.58M743.5 304.01V319.68M744.5 304.47V318.76M745.5 304.88V319.7M746.5 303.2V318.39M747.5 303.18V317.93M748.5 303.06V317.75M749.5 303.17V317.79M750.5 302.8V317.21M751.5 302.76V318.15M752.5 303.27V317.06M753.5 301.59V317.43M754.5 301.61V318.24M755.5 301.53V316.16M756.5 301.67V318.13M757.5 301.07V317.35M758.5 301.38V315.94M759.5 296.73V317.34M760.5 300.03V314.76M761.5 299.95V314.41M762.5 297.14V319.31M763.5 298.95V314.33M764.5 297.89V313.92M765.5 297.79V314.47M766.5 300.06V316.35M767.5 298.99V315.46M768.5 297.88V313.74M769.5 296.44V312.71M770.5 295.75V312.72M771.5 298.77V312.46M772.5 298.45V311.72M773.5 296.88V311.54M774.5 297.79V311.6M775.5 297.31V314.5M776.5 294.11V313.54M777.5 291.27V311.17M778.5 294.71V310.55M779.5 292.97V312.23M780.5 294.59V309.93M781.5 296.11V313.06M782.5 294.83V310.42M783.5 292.86V309.02M784.5 293.74V309.44M785.5 292.99V309.16M786.5 294.65V312.56M787.5 294.23V309.75M788.5 291.88V307.92M789.5 292.48V307.99M790.5 293.65V307.36M791.5 289.37V307.48M792.5 292.61V307.64M793.5 293.42V308.48M794.5 291.3V309.29M795.5 292.46V306.42M796.5 292.29V307.81M797.5 291.17V306.47M798.5 291.47V305.77M799.5 288.72V306.27M800.5 291.15V307.4M801.5 291.67V306.83M802.5 291.18V307.22M803.5 291.48V305.08M804.5 289.98V305.38M805.5 290.57V305.49M806.5 290.72V304.89M807.5 290.89V306.2M808.5 290.28V306.26M809.5 289.36V304.84M810.5 288.91V303.51M811.5 287.97V303.64M812.5 287.09V305.19M813.5 288.14V305.22M814.5 288.77V304.21M815.5 285.01V302.7M816.5 289.13V303.01M817.5 288.09V302.31M818.5 288.6V304.84M819.5 288.09V301.99M820.5 288.35V302.85M821.5 288.17V302.37M822.5 287.2V302.12M823.5 287.14V303.75M824.5 287.98V304.81M825.5 287.52V300.86M826.5 285.56V301.86M827.5 286.4V300.84M828.5 285.16V300.85M829.5 285.32V300.54M830.5 285.81V301.51M831.5 286.21V300.79M832.5 286.62V301.17M833.5 284.86V299.76M834.5 285.24V301.28M835.5 286.09V301.85M836.5 283.12V299.12M837.5 285.51V299.01M838.5 285.34V298.85M839.5 284.63V298.98M840.5 284.92V299.3M841.5 284.61V300.49M842.5 283.26V298.26M843.5 284.59V297.93M844.5 284.22V297.93M845.5 282.91V299.8M846.5 278.48V297.78M847.5 284.27V299.33M848.5 283.39V301M849.5 283.28V297.5M850.5 283.73V301.08M851.5 282.64V297.48M852.5 282.69V298.6M853.5 280.78V297.26M854.5 282.92V296.92M855.5 279.82V296.76M856.5 281.31V297.03M857.5 281.82V296.92M858.5 282.15V296.7M859.5 279.5V295.48M860.5 281.57V298.28M861.5 276.53V295.06M862.5 280.49V296.33M863.5 279.07V295.64M864.5 281.4V295.08M865.5 279.62V296.29M866.5 280.93V295.72M867.5 279.54V295.61M868.5 280.89V294.73M869.5 280.18V295.04M870.5 279.97V293.76M871.5 278.76V293.91M872.5 277.9V293.8M873.5 278.83V295.54M874.5 279.61V294.91M875.5 279.49V296.88M876.5 279.36V294.58M877.5 278.53V292.84M878.5 278.27V293.43M879.5 278.02V292.45M880.5 277.52V292.64M881.5 273.34V292.68M882.5 277.38V292.2M883.5 272.85V292.25M884.5 276.29V294.21M885.5 276.9V293.5M886.5 276.96V291.41M887.5 277.19V291.99M888.5 273.93V291.29M889.5 275.99V292.98M890.5 276.21V290.91M891.5 275.42V291.38M892.5 272.11V293.89M893.5 275.78V291.55M894.5 275.2V290.23M895.5 274.95V293.85M896.5 275.13V291.29M897.5 273.61V289.92M898.5 271.37V289.88M899.5 274.63V291.53M900.5 274.98V290.19M901.5 274.63V290.34M902.5 274.65V289.47M903.5 274.11V289.23M904.5 274.19V289.32M905.5 273.02V289.09M906.5 271.29V289.59M907.5 273.37V289.06M908.5 270.77V288.58M909.5 271.35V288.54M910.5 268.74V289.09M911.5 271.71V291.3M912.5 272.82V288.13M913.5 270.93V289.32M914.5 270.61V288.3M915.5 271.38V288M916.5 271.46V288.08M917.5 270.87V288.07M918.5 271.68V289.11M919.5 271.96V290.02M920.5 270.9V287.78M921.5 271.71V288.47M922.5 270.68V289.34M923.5 270.96V288.09M924.5 267.99V287.7M925.5 265.53V290.79M926.5 265.44V291.79M927.5 270.86V289.81M928.5 269.69V287.38M929.5 265.16V288.67M930.5 268.32V288.26M931.5 270.83V290.16M932.5 270.55V287.32M933.5 269.18V287.13M934.5 269.65V288.81M935.5 270.42V288.49M936.5 270.31V287.72M937.5 268.64V288.54M938.5 270.23V286.9M939.5 264.79V287.34M940.5 269.18V287.25M941.5 268.01V288.69M942.5 268.15V287.24M943.5 268.4V287.55M944.5 269.38V291.35M945.5 263.94V288.79M946.5 263.55V287.25M947.5 266.33V286.61M948.5 267.03V288.24M949.5 264.48V289.12M950.5 265.53V286.54M951.5 266.41V287.07M952.5 268.33V286.7M953.5 266.11V289.06M954.5 265.56V287.74M955.5 268.37V286.07M956.5 267.14V286.14M957.5 267.79V285.87M958.5 268.12V287.84M959.5 267.87V288.89M960.5 267.52V288.86M961.5 267.49V286.05M962.5 267.15V285.48M963.5 266.93V286.25M964.5 267.82V288.86M965.5 266.92V285.32M966.5 261.93V285.74M967.5 267.03V285.27M968.5 267.27V287.38M969.5 265.8V286.38M970.5 266.75V285.68M971.5 261.16V285.86M972.5 261.06V288.89M973.5 266.73V288.32M974.5 266.83V287.12M975.5 263.78V286.98M976.5 265.23V287.81M977.5 266.27V286.14M978.5 265.91V285.61M979.5 265.99V286.88M980.5 264.73V287.34M981.5 264.37V286.21M982.5 261.42V287.55M983.5 264.45V285.17M984.5 261.07V285.25M985.5 265.59V285.09M986.5 263.43V289.22M987.5 263.68V286.25M988.5 260.38V286.98M989.5 264.3V285.3M990.5 262.65V284.81M991.5 264.98V285.85M992.5 262.02V284.53M993.5 262.86V288.11M994.5 264.65V284.18M995.5 263.53V284.62M996.5 259.12V289.81M997.5 263.5V286.72M998.5 262.63V284.07M999.5 258.41V284.02M1000.5 264.25V284.74M1001.5 264.37V284.84M1002.5 263.4V289.42M1003.5 263.39V287.17M1004.5 261.55V285.26M1005.5 263.89V284.29M1006.5 263.13V284.55M1007.5 262.44V284.93M1008.5 263.66V285.36M1009.5 258.4V284.03M1010.5 263.63V283.62M1011.5 264.21V283.71M1012.5 263.36V287.01M1013.5 262.14V289.6M1014.5 260.98V285.26M1015.5 262.76V283.62" stroke="#ff00ff" stroke-width="1.06" fill="none"/>
<path d="M563 480L563.3 501L564 470L565.5 420L566.5 380L567.6 345L568.3 352" fill="none" stroke="#ff00ff" stroke-width="1.6" stroke-linejoin="round"/>
<path d="M17.5 530.52V540.5M18.5 530.03V540.27M19.5 530.22V540.67M20.5 530.32V540.72M21.5 530.89V541.51M22.5 529.39V541.11M23.5 530.88V541.11M24.5 528.95V544.51M25.5 529.58V540.25M26.5 528.89V541.29M27.5 530.68V542.73M28.5 529.25V542.46M29.5 530.72V541.06M30.5 530.52V540.55M31.5 529.57V541.16M32.5 530.6V540.98M33.5 528.36V541.04M34.5 528.55V541.03M35.5 526.14V540.23M36.5 530.38V541M37.5 529.7V543.67M38.5 530.02V540.85M39.5 529.99V540.96M40.5 529.78V543.14M41.5 530.99V540.59M42.5 528.91V540.26M43.5 529.44V540.23M44.5 529.96V541.81M45.5 530.73V540.68M46.5 530.74V541.42M47.5 530.25V541.13M48.5 530.61V541.08M49.5 527.91V541.71M50.5 527.97V540.48M51.5 530.27V540.69M52.5 530.58V541.83M53.5 530.81V541.02M54.5 529.51V542.94M55.5 530.98V540.52M56.5 530.32V542.95M57.5 530.82V542.04M58.5 530.49V540.99M59.5 528.37V540.27M60.5 530.6V540.37M61.5 530.86V540.56M62.5 529.79V541.07M63.5 530.87V541.82M64.5 530.29V540.35M65.5 529.28V541.92M66.5 530.76V543.01M67.5 529.34V540.46M68.5 531V542.22M69.5 529.25V540.3M70.5 529.55V541.68M71.5 530V541.99M72.5 526.81V540.6M73.5 529.2V542.74M74.5 530.62V541.35M75.5 529.85V542.09M76.5 530.16V540.52M77.5 530.71V540.98M78.5 530.85V542.16M79.5 528.8V540.48M80.5 529.81V541.32M81.5 530.87V541.71M82.5 529.55V540.57M83.5 530.9V540.53M84.5 529.52V540.83M85.5 529.31V540.37M86.5 530.89V540.63M87.5 528.88V540.38M88.5 530.92V541.6M89.5 530.64V541.3M90.5 530.38V540.22M91.5 529.11V541.73M92.5 529.41V540M93.5 529.64V539.55M94.5 529.12V540.42M95.5 527.75V540.13M96.5 527.84V539.4M97.5 528.06V538.29M98.5 527.45V537.73M99.5 526.06V537.24M100.5 526.51V536.93M101.5 524.4V537.12M102.5 525.24V536.08M103.5 522.85V537.9M104.5 524.3V535.44M105.5 522.42V534.4M106.5 523.6V533.71M107.5 522.7V534.56M108.5 522.78V533.17M109.5 517.83V532.81M110.5 521.57V533.53M111.5 519.37V531.72M112.5 521.02V531.81M113.5 519.35V532.92M114.5 519.17V530.27M115.5 519.08V529.79M116.5 518.72V529.63M117.5 516.39V530.87M118.5 515.73V528.67M119.5 514.51V527.68M120.5 514.82V528.07M121.5 514.81V527.09M122.5 511.68V526.09M123.5 514.01V527.29M124.5 514.93V526.85M125.5 514.8V526M126.5 514.05V524.77M127.5 514.1V525.49M128.5 512.65V523.61M129.5 509.78V523.41M130.5 512.77V523.34M131.5 512.02V524.65M132.5 509.62V523.08M133.5 511.7V521.83M134.5 511.73V522.09M135.5 510.56V521.59M136.5 507.04V521.17M137.5 510.29V520.82M138.5 510.17V522.72M139.5 509.11V520.34M140.5 509.09V519.49M141.5 508.9V519.52M142.5 508.33V522.36M143.5 507.73V518.35M144.5 508.14V517.93M145.5 507.42V518.93M146.5 505.28V517.31M147.5 505.6V517.26M148.5 505.99V517.08M149.5 506.36V516.03M150.5 505.01V516.77M151.5 505.34V517.82M152.5 503.82V515.38M153.5 505.17V515.54M154.5 503.89V514.69M155.5 504.62V514.82M156.5 504.34V515.19M157.5 503.1V513.9M158.5 503.2V513.55M159.5 503.29V513.19M160.5 501.52V513.3M161.5 501.66V512.84M162.5 500.99V513.03M163.5 501.28V512.33M164.5 501.22V511.75M165.5 498.12V512.37M166.5 500.71V511.98M167.5 501.07V511.08M168.5 500.63V512.23M169.5 500.59V510.68M170.5 498.28V511.33M171.5 498.75V509.87M172.5 499.47V510.44M173.5 499.09V510.21M174.5 498.72V510.07M175.5 497.99V510.04M176.5 494.29V508.52M177.5 493.91V507.74M178.5 495.81V507.45M179.5 496.81V507.6M180.5 495.82V507.18M181.5 496.75V508.02M182.5 495.87V507.59M183.5 495.69V505.91M184.5 494.58V505.81M185.5 495.1V505.25M186.5 495.13V506.04M187.5 493.68V505.64M188.5 494.22V505.64M189.5 493.39V504.24M190.5 493.42V504.61M191.5 492.58V503.61M192.5 493.2V503.5M193.5 493.16V503.2M194.5 491.64V503.32M195.5 492.45V503.47M196.5 492.21V503.23M197.5 491.86V501.63M198.5 491.42V501.94M199.5 491.09V503.06M200.5 488.27V500.93M201.5 489.33V501.45M202.5 489.56V500.21M203.5 487.05V502.71M204.5 489.69V499.64M205.5 488.97V499.12M206.5 488.46V500.84M207.5 488.66V500.03M208.5 487.97V497.89M209.5 485.7V497.86M210.5 487.42V497.32M211.5 486.86V496.99M212.5 486.78V496.81M213.5 485.78V496.77M214.5 485.94V496.59M215.5 484.47V496.79M216.5 485.2V497.66M217.5 483.71V495.65M218.5 484.29V494.88M219.5 484.46V496.31M220.5 483.32V493.9M221.5 481.32V495.64M222.5 483.55V494.33M223.5 482.97V493.55M224.5 481.1V492.87M225.5 481.93V493.19M226.5 482.13V492.81M227.5 481.52V495.59M228.5 481.59V492.51M229.5 481.48V491.32M230.5 481.12V490.88M231.5 480.22V490.64M232.5 479.11V490.27M233.5 479.44V491.87M234.5 480V489.86M235.5 478.42V489.98M236.5 476.9V489.48M237.5 478.8V491.95M238.5 478.61V491.9M239.5 476.54V488.46M240.5 477.69V490.79M241.5 478.08V489.57M242.5 476.44V488.79M243.5 476.74V487.24M244.5 474.2V486.96M245.5 475.57V487.86M246.5 476.45V487.46M247.5 476.02V487.42M248.5 476.23V488.46M249.5 475.51V487.1M250.5 475.02V486.87M251.5 474.96V485.65M252.5 474.95V485.19M253.5 474.56V486.14M254.5 473.17V484.39M255.5 470.3V486.43M256.5 470.48V483.25M257.5 472.06V484.12M258.5 472.01V482.5M259.5 470.02V482.72M260.5 471.36V483.49M261.5 471.6V481.49M262.5 469.01V481.44M263.5 471.2V480.93M264.5 465.64V481.79M265.5 470.34V480.26M266.5 467.98V480.87M267.5 469.07V479.6M268.5 469.09V482.07M269.5 469.3V479.36M270.5 468.92V484.5M271.5 468.55V481.25M272.5 466.5V479.18M273.5 467.98V478.73M274.5 467.02V477.9M275.5 467.22V477.62M276.5 465.44V476.72M277.5 464.65V476.8M278.5 466.11V476.21M279.5 465.48V476.66M280.5 464.94V477.51M281.5 464.74V475.7M282.5 460.64V474.9M283.5 464.8V474.74M284.5 464.12V474.15M285.5 463.64V473.74M286.5 461.32V474.04M287.5 461.43V474.26M288.5 461.91V474.16M289.5 462.54V473.73M290.5 462.38V472.91M291.5 461.42V473.31M292.5 461.85V471.94M293.5 460.01V472.87M294.5 457.64V471.07M295.5 460.93V470.77M296.5 459.59V471.74M297.5 459.55V471.59M298.5 459.58V470.62M299.5 457.48V470.55M300.5 458.66V470.1M301.5 458.76V470.34M302.5 458.3V468.78M303.5 458.31V468.9M304.5 458.01V468.88M305.5 457.84V468.27M306.5 457.44V467.95M307.5 454.14V467.29M308.5 457.4V468.19M309.5 456.63V467.22M310.5 455.95V466.79M311.5 456.28V466.06M312.5 454.2V468.55M313.5 455.64V466.09M314.5 455.3V465.24M315.5 453.17V466.7M316.5 454.83V464.89M317.5 453.62V465.9M318.5 453.89V464.51M319.5 453.97V465.33M320.5 451.95V465.39M321.5 453.53V464.04M322.5 449.15V464.11M323.5 452.45V462.72M324.5 452.71V463.58M325.5 452.41V463.63M326.5 451.1V462.32M327.5 449.68V464.09M328.5 450.65V461.21M329.5 450.43V461.35M330.5 450.74V463.16M331.5 449.42V460.35M332.5 450.18V460.35M333.5 449.3V460.03M334.5 449.28V461.03M335.5 449.37V460.33M336.5 448.87V461.66M337.5 445.95V458.87M338.5 447.76V458.3M339.5 447.87V458.87M340.5 447.1V458.02M341.5 447.81V457.45M342.5 446.74V457.23M343.5 446.91V457.72M344.5 444.69V457.2M345.5 446.43V457.08M346.5 446.12V457.44M347.5 445.99V455.94M348.5 445.3V457.75M349.5 445.42V455.29M350.5 445.18V455.04M351.5 444.64V455.02M352.5 443.33V454.76M353.5 443.84V454.46M354.5 442.71V456.01M355.5 443.37V455.94M356.5 443.35V456.93M357.5 442.61V453.99M358.5 442.6V452.88M359.5 442.65V454.45M360.5 442.07V453.2M361.5 441.62V452.47M362.5 441.73V451.63M363.5 441.27V452.3M364.5 440.62V450.88M365.5 439.87V451.17M366.5 440.75V450.61M367.5 440.29V451.75M368.5 439.44V450.13M369.5 439.66V449.78M370.5 439.33V449.58M371.5 437.81V450.41M372.5 437.88V450.73M373.5 437.73V448.4M374.5 438.45V448.17M375.5 437.91V448.45M376.5 436.19V448.29M377.5 437.07V447.4M378.5 433.34V448.23M379.5 436.63V446.59M380.5 432.75V446.55M381.5 434.59V446.08M382.5 435.12V446.11M383.5 433.69V445.73M384.5 435.49V445.31M385.5 433.67V448.64M386.5 433.99V445.66M387.5 434.4V444.54M388.5 434.35V448.12M389.5 434.11V444.59M390.5 433.42V443.56M391.5 432.98V445.72M392.5 432.97V442.93M393.5 431.96V443.53M394.5 431.94V442.36M395.5 430.29V441.98M396.5 431.87V441.84M397.5 431.04V441.91M398.5 430.66V442.26M399.5 428.92V441.3M400.5 430.83V442.15M401.5 430.55V440.45M402.5 430.12V440.69M403.5 428.45V439.61M404.5 429.33V441.08M405.5 428.21V438.99M406.5 427.92V440.16M407.5 428.26V438.45M408.5 427.41V438.37M409.5 428.04V437.87M410.5 427.38V437.52M411.5 427.11V437.89M412.5 426.49V437.31M413.5 425.39V436.59M414.5 426.3V438.9M415.5 424.4V438.43M416.5 424.68V436.37M417.5 424.3V436.17M418.5 425.45V435.34M419.5 425.2V436.86M420.5 424.64V435.02M421.5 423.98V434.33M422.5 423.25V435.54M423.5 422.61V435.8M424.5 423.54V433.56M425.5 422.22V434.31M426.5 422.91V433.27M427.5 422.93V434.36M428.5 422.21V433.97M429.5 422.13V432.41M430.5 421.56V433.12M431.5 419.86V431.91M432.5 420.54V431.72M433.5 419.47V432.35M434.5 420.36V431.1M435.5 420.58V432.54M436.5 419.01V430.46M437.5 420.26V430.04M438.5 416.74V429.59M439.5 418.14V430.03M440.5 418.72V429.78M441.5 418.72V429.54M442.5 418.88V430.97M443.5 418.59V428.32M444.5 417.3V428.92M445.5 416.5V428.8M446.5 415.2V427.4M447.5 417.58V427.34M448.5 415.81V426.96M449.5 416.28V427.99M450.5 416.59V426.99M451.5 414.18V427.34M452.5 415.7V426.34M453.5 415.61V428.65M454.5 414.13V426.28M455.5 415.02V426.18M456.5 414.44V426.18M457.5 414.38V426.44M458.5 413.4V424.63M459.5 413.45V425.39M460.5 413.25V426.7M461.5 413.72V425.48M462.5 412.2V423.6M463.5 411.28V422.81M464.5 412.49V423.63M465.5 410.89V422.57M466.5 407.2V422.87M467.5 412.01V421.67M468.5 411.7V422.1M469.5 411.11V421.28M470.5 410.63V420.78M471.5 408.54V422.24M472.5 409.84V420.73M473.5 410.01V420.78M474.5 409.67V423.29M475.5 406.69V420.6M476.5 407.79V419.1M477.5 409.13V419.16M478.5 408.85V419.01M479.5 404.43V419.98M480.5 405.23V418.15M481.5 407.89V417.64M482.5 407.54V417.4M483.5 406.83V417.42M484.5 406.18V417.6M485.5 406.11V416.86M486.5 405.41V417.39M487.5 405.21V416.58M488.5 405.56V416M489.5 405.86V416.01M490.5 404.58V415.31M491.5 403.2V416.85M492.5 402.88V416.06M493.5 403.76V414.19M494.5 403.75V414.97M495.5 399.53V413.38M496.5 403.33V413.34M497.5 402.54V413.44M498.5 402.48V414.02M499.5 401.82V414.19M500.5 401.47V411.8M501.5 401.31V414.44M502.5 400.24V412.45M503.5 400.7V411.12M504.5 399.08V414.09M505.5 397.32V409.71M506.5 399.3V415.28M507.5 398.68V412.11M508.5 398.83V408.67M509.5 395.89V408.63M510.5 397.67V408.46M511.5 397.31V410.41M512.5 394.92V409.47M513.5 397.24V408.77M514.5 397.2V407.27M515.5 394.02V406.71M516.5 396.09V406.97M517.5 395.92V406.98M518.5 394.77V405.49M519.5 392.94V405.1M520.5 393.92V405.1M521.5 394.6V404.4M522.5 388.4V405.56M523.5 393.43V405.18M524.5 390.19V405.85M525.5 392.57V403.21M526.5 392.24V406.51M527.5 391.3V403.28M528.5 390.41V402.34M529.5 391.08V403.35M530.5 391.4V403.06M531.5 391.32V401.59M532.5 390.2V400.7M533.5 388.23V400.84M534.5 390.3V400.51M535.5 389.33V400.26M536.5 389.94V399.52M537.5 388.41V399.28M538.5 389.09V400.51M539.5 387.12V400.71M540.5 388.63V398.31M541.5 387.14V398.93M542.5 387.81V397.76M543.5 387.42V397.73M544.5 386.81V401.13M545.5 387.19V396.98M546.5 385.95V396.73M547.5 386.61V396.92M548.5 382.31V396.45M549.5 385.92V396.42M550.5 385.84V396.01M551.5 384.54V395.61M552.5 383.87V395.14M553.5 385.07V395.65M554.5 384.3V396.88M555.5 384.46V395.47M556.5 383.13V394.23M557.5 383.76V394.38M558.5 382.15V393.74M559.5 382.59V393.92M560.5 383.76V391.27M561.5 384.34V393.24M562.5 387.66V394.98M563.5 387.2V400.6M564.5 396.66V406.75M565.5 402.79V412.75M566.5 408.23V415.31M567.5 398.04V411.9M568.5 394.7V405.95M569.5 389.76V400.83M570.5 386.26V393.86M571.5 379.88V389.64M572.5 378.18V385.99M573.5 376.07V382.21M574.5 371.9V382.38M575.5 372.5V380.06M576.5 372.47V378.95M577.5 370.87V380.85M578.5 369.9V380.33M579.5 368.96V380.63M580.5 367.68V380.54M581.5 369.93V380.88M582.5 370.59V381.93M583.5 371.21V381.01M584.5 371.14V383.18M585.5 371.14V381.39M586.5 371.79V382.6M587.5 370.81V382.09M588.5 371.26V382.78M589.5 372.34V383.15M590.5 372.72V387.26M591.5 370.69V385M592.5 371.77V383.6M593.5 372.85V382.34M594.5 371.12V383.32M595.5 371.8V382.48M596.5 372.39V384.54M597.5 371.84V381.92M598.5 372.08V382.23M599.5 372.33V385.52M600.5 369.87V383.29M601.5 372V381.94M602.5 371.68V382.49M603.5 369.94V382.56M604.5 369.83V380.93M605.5 371.19V380.7M606.5 369.15V382.17M607.5 370.07V380.47M608.5 368.66V380.13M609.5 370.01V379.8M610.5 365.93V380.14M611.5 368.13V380.82M612.5 368.33V383.14M613.5 367.31V381.02M614.5 365.09V378.09M615.5 366.61V377.86M616.5 367.21V377.62M617.5 362.73V376.86M618.5 366.23V376.54M619.5 360.43V376.69M620.5 364.89V376.33M621.5 364.34V375.71M622.5 364.97V376.36M623.5 363.99V376.89M624.5 364.53V376.29M625.5 363.26V374.95M626.5 363.78V374.64M627.5 363.92V373.6M628.5 363.33V373.33M629.5 363.35V374.16M630.5 361.79V373.56M631.5 362.57V373.58M632.5 360.75V372.97M633.5 361.94V372.53M634.5 361.4V371.71M635.5 361.44V373.1M636.5 360.3V373.5M637.5 360.81V370.81M638.5 359.99V370.26M639.5 360.04V370.68M640.5 359.38V372M641.5 358.82V370.25M642.5 358.44V370.42M643.5 358.5V368.52M644.5 354.66V369.73M645.5 358.1V367.92M646.5 357.63V368.51M647.5 357.38V367.1M648.5 356.48V366.73M649.5 356.5V366.84M650.5 356.21V366M651.5 355.78V365.92M652.5 355.33V365.82M653.5 354.91V365.31M654.5 354.98V366.38M655.5 353.3V364.88M656.5 354.28V364.11M657.5 351.61V364.09M658.5 353.33V364.83M659.5 350.98V362.89M660.5 352.14V363.22M661.5 352.36V362.42M662.5 351.16V362.8M663.5 350.77V362.29M664.5 350.93V361.03M665.5 351.04V362.42M666.5 348.72V362.61M667.5 350.3V361.39M668.5 349.85V360.01M669.5 349.48V361.21M670.5 347.65V360.69M671.5 348.54V361.31M672.5 348.38V359.07M673.5 347.22V358.15M674.5 347.52V357.65M675.5 346.07V357.4M676.5 347.17V357.19M677.5 345.96V357.53M678.5 345.9V358.1M679.5 344.9V356.08M680.5 345.19V355.69M681.5 345.34V355.32M682.5 345.2V355.25M683.5 342.76V355.55M684.5 344.51V354.39M685.5 343.36V354.55M686.5 343.89V353.56M687.5 342.75V354.04M688.5 343.16V354.26M689.5 342.63V353.33M690.5 341.86V352.52M691.5 339.4V352.32M692.5 341.48V352.3M693.5 339.92V355.63M694.5 339.99V351.72M695.5 339.91V351.67M696.5 337.68V353.9M697.5 339.17V350.32M698.5 339.46V350.37M699.5 339.75V351.02M700.5 339.48V350.45M701.5 338.77V349.48M702.5 337.92V349.93M703.5 334.29V354.35M704.5 336.96V348.37M705.5 337.18V348.46M706.5 335.18V348.08M707.5 337.27V347.22M708.5 336.78V347.67M709.5 336.76V346.73M710.5 336.18V346.4M711.5 336.37V346.63M712.5 335.84V346.45M713.5 335.22V345.96M714.5 335.55V345.2M715.5 334.58V348.4M716.5 334.84V345.03M717.5 334.56V345.73M718.5 334.03V345.73M719.5 334.48V344.05M720.5 334.02V344.14M721.5 333.52V343.94M722.5 330.42V343.8M723.5 332.71V346.3M724.5 332.31V343.67M725.5 331.35V342.94M726.5 332.84V345.47M727.5 331.89V342.95M728.5 332.35V343.22M729.5 331.72V342.65M730.5 331.63V343.89M731.5 331.27V341.48M732.5 329.26V341.19M733.5 330.96V341.37M734.5 327.09V340.6M735.5 330.58V341.83M736.5 330.51V340.55M737.5 328.83V341.03M738.5 328.55V339.68M739.5 327.69V339.77M740.5 327.98V339.74M741.5 327.2V339.51M742.5 328.88V338.78M743.5 328.25V338.43M744.5 328.52V340.22M745.5 327.61V339.89M746.5 328.06V338.31M747.5 327.35V337.53M748.5 327.43V339.73M749.5 326.21V337.65M750.5 326.32V338.67M751.5 323.94V337.36M752.5 326.73V338.27M753.5 326.36V336.25M754.5 326.15V336.46M755.5 325.19V336.12M756.5 325.19V335.41M757.5 324.31V335.79M758.5 324.97V336.57M759.5 322.3V337.1M760.5 320.67V334.37M761.5 324.13V334.66M762.5 324.08V335.18M763.5 321.79V333.73M764.5 323.19V336.77M765.5 321.39V333.7M766.5 323.16V333.39M767.5 322.22V334.01M768.5 322.43V332.48M769.5 318.14V331.85M770.5 321.06V331.62M771.5 320.3V331.75M772.5 318.78V331.14M773.5 318.96V330.83M774.5 320.69V330.35M775.5 320.34V330.43M776.5 316.53V330.06M777.5 318.53V329.34M778.5 318.75V329.77M779.5 319.06V329.54M780.5 318.25V328.76M781.5 316.75V329.22M782.5 318.08V327.84M783.5 317.84V327.72M784.5 316.57V330.55M785.5 313.8V328.78M786.5 316.82V328.03M787.5 315.2V326.79M788.5 310.87V326.75M789.5 315.87V325.76M790.5 315.66V326.14M791.5 314.62V326.95M792.5 315.39V324.81M793.5 311.6V324.9M794.5 314.69V326.42M795.5 314.68V325.77M796.5 312.33V324.83M797.5 313.46V323.81M798.5 313.27V324.55M799.5 312.53V324.13M800.5 313.68V323.45M801.5 312.54V323.08M802.5 313.29V323.09M803.5 311.61V323.39M804.5 312.56V325.72M805.5 311.93V322.47M806.5 311.77V323.93M807.5 311.94V322.37M808.5 311.34V325.96M809.5 310.98V321.6M810.5 310.93V321.59M811.5 310.96V322.25M812.5 311.38V321.51M813.5 310.82V321.51M814.5 309.28V321.03M815.5 309.82V320.54M816.5 310.34V320.73M817.5 309.69V320.08M818.5 308.82V320.34M819.5 309.64V319.76M820.5 308.08V321.6M821.5 306.93V319.38M822.5 309.45V319.91M823.5 309.32V320.67M824.5 308.02V318.95M825.5 308.39V319.51M826.5 308.62V318.63M827.5 307.06V319.13M828.5 307.54V317.92M829.5 308V317.92M830.5 308.02V318.46M831.5 307.02V319.84M832.5 306.88V319.58M833.5 306.87V317.62M834.5 306.99V317.33M835.5 304.37V317.19M836.5 306.95V316.77M837.5 306.55V317.13M838.5 305.87V316.61M839.5 303.78V317.22M840.5 306.19V315.63M841.5 304.95V316.39M842.5 304.98V316.05M843.5 305.88V315.84M844.5 304V316.04M845.5 305.63V315.13M846.5 303.21V315.67M847.5 305.26V315.99M848.5 302.73V316.64M849.5 304.16V316.17M850.5 304.99V315.02M851.5 303.3V314.7M852.5 304.68V316.17M853.5 303.5V314.05M854.5 304.53V314.73M855.5 301.4V314.76M856.5 302.27V313.79M857.5 303.38V313.76M858.5 303.72V313.6M859.5 303.38V313.37M860.5 302.81V314.24M861.5 301.41V314.54M862.5 303.56V314.99M863.5 302.74V315.59M864.5 302.72V312.8M865.5 302.09V312.79M866.5 299.07V313.28M867.5 300.79V313.09M868.5 302.62V313.4M869.5 301.68V312.83M870.5 302.5V312.67M871.5 301.47V312.28M872.5 302.46V312.59M873.5 301.46V311.9M874.5 302.12V315.3M875.5 302.03V313.12M876.5 301.88V311.63M877.5 301.49V313.48M878.5 300.55V311.4M879.5 300.74V312.23M880.5 301.21V312.25M881.5 301.03V311.27M882.5 300.48V311.11M883.5 301.21V312.78M884.5 300.64V311.49M885.5 300.15V311.36M886.5 300.8V311.39M887.5 301.17V310.92M888.5 301.06V315.85M889.5 298.62V311.36M890.5 300.67V312.13M891.5 300.35V311.68M892.5 299.47V310.81M893.5 299.02V310.04M894.5 298.41V310.35M895.5 298.64V311.24M896.5 299.6V309.78M897.5 299.29V309.18M898.5 297.5V310.1M899.5 298.75V309.57M900.5 297.15V308.7M901.5 298.66V309.62M902.5 298.18V309M903.5 298.49V308.4M904.5 297.53V308.41M905.5 295.7V310.16M906.5 294.8V308M907.5 297.44V307.63M908.5 297.56V307.44M909.5 297.15V310.35M910.5 296.25V307.5M911.5 297.21V309.57M912.5 297.32V308.6M913.5 295.28V306.64M914.5 294.04V307.45M915.5 296.41V306.81M916.5 295.89V306.85M917.5 294.74V308.29M918.5 296.29V305.97M919.5 295.11V306.93M920.5 295.49V305.9M921.5 296.4V308.04M922.5 295.96V306.32M923.5 292.72V305.83M924.5 295.26V305.6M925.5 295.38V306.81M926.5 295.96V306.83M927.5 292.6V307.08M928.5 294.43V308.2M929.5 294.66V305.98M930.5 294.11V306.76M931.5 294.79V306.16M932.5 295.51V305.39M933.5 295.25V306.87M934.5 294.05V305.18M935.5 290.4V304.83M936.5 295.37V305.1M937.5 295.28V307.63M938.5 294.85V305.05M939.5 293.29V305.25M940.5 294.15V305M941.5 294.46V307.5M942.5 294.69V305.03M943.5 294.29V304.36M944.5 294.71V304.85M945.5 293.2V304.64M946.5 294.67V306.73M947.5 294.51V306.09M948.5 294.54V304.91M949.5 294.36V304.09M950.5 293.9V305.13M951.5 293.81V304.19M952.5 293.8V304.32M953.5 293.91V306.57M954.5 293.96V303.58M955.5 293.3V303.8M956.5 292.75V303.34M957.5 292.83V303.68M958.5 291.27V303.52M959.5 293.25V303.47M960.5 292.99V303.35M961.5 292.57V303.48M962.5 292.38V303.22M963.5 292.93V303.62M964.5 292.2V303.8M965.5 292.84V302.76M966.5 293.22V302.76M967.5 293.08V302.74M968.5 292.14V302.9M969.5 290.78V302.69M970.5 292.82V302.57M971.5 292.89V303.45M972.5 292.12V302.54M973.5 291.27V303.31M974.5 292.31V303.07M975.5 291.74V302.65M976.5 292.66V302.47M977.5 289.77V302.42M978.5 291.62V301.99M979.5 291.09V303.83M980.5 292.05V302.24M981.5 291.74V302.01M982.5 292.16V301.8M983.5 291.18V302.31M984.5 289.15V304.82M985.5 290.15V304.37M986.5 290.34V301.45M987.5 291.97V305.09M988.5 289.98V302.26M989.5 291.02V301.82M990.5 291.38V301.35M991.5 291.08V301.45M992.5 291.68V303.11M993.5 290.9V303.1M994.5 291.35V301.81M995.5 291.31V302.67M996.5 291.34V301.88M997.5 290.71V301.17M998.5 291.38V301.38M999.5 290.66V302.36M1000.5 291.11V300.81M1001.5 290.92V302.16M1002.5 290.96V301.49M1003.5 291.13V300.51M1004.5 289.87V301.05M1005.5 290.93V300.95M1006.5 288.17V300.74M1007.5 290.12V300.73M1008.5 290.17V300.17M1009.5 288.67V300.94M1010.5 290.33V300.35M1011.5 290.49V302.67M1012.5 288.8V300.37M1013.5 289.65V300.64M1014.5 290.29V299.81M1015.5 289.13V299.9" stroke="#ffff00" stroke-width="1.06" fill="none"/>
<path d="M17 70.5H1016" stroke="#e400e4" stroke-width="1.2"/>
<path d="M17 117.9H1016" stroke="#a800a8" stroke-width="1.6" opacity="0.4"/><path d="M17 117.9H1016" stroke="#b008b0" stroke-width="1.7" stroke-dasharray="3 2"/>
<path d="M17 293.7H1016" stroke="#b400b4" stroke-width="1.8"/>
<path d="M17 485.2H1016" stroke="#a800a8" stroke-width="1.3" opacity="0.4"/><path d="M17 485.2H1016" stroke="#b808b8" stroke-width="1.3" stroke-dasharray="3 2"/>
<path d="M414 47V161M419 47V161" stroke="#a09418" stroke-width="1.7" stroke-dasharray="2.3 0.7"/>
<rect x="406.5" y="160.8" width="20" height="5.2" fill="#ffff00"/>
<path d="M412.3 47.2H422L417.2 56.4Z" fill="#ffa000"/>
<path d="M746.8 176H757.2L752 185.8Z" fill="#ffa800"/>
<circle cx="116.6" cy="61.9" r="6.1" fill="#ffa000"/>
<text x="116.6" y="65.1" font-size="10.5" font-weight="bold" text-anchor="middle" fill="#201000" font-family="Liberation Sans, sans-serif">a</text>
<circle cx="116.6" cy="109.4" r="6.1" fill="#ffa000"/>
<text x="116.6" y="113.0" font-size="10.5" font-weight="bold" text-anchor="middle" fill="#201000" font-family="Liberation Sans, sans-serif">b</text>
<path d="M995.8 80L1004.1999999999999 75V85Z" fill="#ffff00"/><path d="M1003.8 80H1019" stroke="#e8e000" stroke-width="1.8"/>
<path d="M995.8 331.3L1004.1999999999999 326.3V336.3Z" fill="#ffff00"/><path d="M1003.8 331.3H1019" stroke="#e8e000" stroke-width="1.8"/>
<circle cx="10.2" cy="136.3" r="9" fill="#ff00ff" stroke="#a8a8a8" stroke-width="1.6"/>
<path d="M19.5 135.3H23.6V131.3L30.6 136.3L23.6 141.3V137.3H19.5Z" fill="#ff00ff" stroke="#000" stroke-width="0.7" stroke-dasharray="1.5 1"/>
<circle cx="10.2" cy="141" r="8.9" fill="#ffff00" stroke="#ffa000" stroke-width="1.8"/><text x="10.2" y="145" font-size="11.5" text-anchor="middle" fill="#282800" font-family="Liberation Sans, sans-serif">1</text>
<path d="M19.5 140H23.6V136L30.6 141L23.6 146V142H19.5Z" fill="#ffff00" stroke="#000" stroke-width="0.7" stroke-dasharray="1.5 1"/>
<circle cx="10.2" cy="560.6" r="9" fill="#ff00ff" stroke="#a8a8a8" stroke-width="1.6"/><text x="10.2" y="564.6" font-size="11.5" text-anchor="middle" fill="#282828" font-family="Liberation Sans, sans-serif">3</text>
<path d="M19.5 559.6H23.6V555.6L30.6 560.6L23.6 565.6V561.6H19.5Z" fill="#ff00ff" stroke="#000" stroke-width="0.7" stroke-dasharray="1.5 1"/>
<circle cx="10.2" cy="578" r="8.9" fill="#ffff00" stroke="#ffa000" stroke-width="1.8"/><text x="10.2" y="582" font-size="11.5" text-anchor="middle" fill="#282800" font-family="Liberation Sans, sans-serif">1</text>
<path d="M19.5 577H23.6V573L30.6 578L23.6 583V579H19.5Z" fill="#ffff00" stroke="none" stroke-width="0.7" stroke-dasharray="1.5 1"/>
</svg>
<div class="pn" style="left:21px;top:674px;width:281px;height:93px"></div>
<div class="pill" style="left:29.5px;top:681.6px;width:33.5px;height:13.5px;background:linear-gradient(#c4c4c4,#909090 40%,#383838)"><div class="pill" style="left:1.7px;top:1.8px;width:30.1px;height:10.2px;background:radial-gradient(ellipse at 50% 40%,#ffff30,#e8e800 60%,#b8b800)"></div><span class="pt" style="left:0;width:33.5px;top:1.85px">C1</span></div>
<div class="pill" style="left:29.5px;top:702.7px;width:33.5px;height:13.5px;background:linear-gradient(#c4c4c4,#909090 40%,#383838)"><div class="pill" style="left:1.7px;top:1.8px;width:30.1px;height:10.2px;background:radial-gradient(ellipse at 50% 40%,#ff30ff,#e800e8 60%,#b000b0)"></div><span class="pt" style="left:0;width:33.5px;top:1.85px">C3</span></div>
<div class="pill" style="left:29.5px;top:723.6px;width:33.5px;height:13.5px;background:linear-gradient(#c4c4c4,#909090 40%,#383838)"><div class="pill" style="left:1.7px;top:1.8px;width:30.1px;height:10.2px;background:radial-gradient(ellipse at 50% 40%,#ffff30,#e8e800 60%,#b8b800)"></div><span class="pt" style="left:0;width:33.5px;top:1.85px">Z1C1</span></div>
<div class="pill" style="left:29.5px;top:744.4px;width:33.5px;height:13.5px;background:linear-gradient(#c4c4c4,#909090 40%,#383838)"><div class="pill" style="left:1.7px;top:1.8px;width:30.1px;height:10.2px;background:radial-gradient(ellipse at 50% 40%,#ff30ff,#e800e8 60%,#b000b0)"></div><span class="pt" style="left:0;width:33.5px;top:1.85px">Z1C3</span></div>
<span class="t" style="left:67px;top:682.37px;">200mV/div</span>
<span class="t" style="left:67px;top:703.47px;">100mV/div</span>
<span class="t" style="left:67px;top:723.67px;">200mV</span>
<span class="t" style="left:117px;top:723.67px;">200µs</span>
<span class="t" style="left:167px;top:723.67px;">-1.47ms</span>
<span class="t" style="left:217.5px;top:723.67px;">528µs</span>
<span class="t" style="left:67px;top:744.87px;">100mV</span>
<span class="t" style="left:117px;top:744.87px;">200µs</span>
<span class="t" style="left:167px;top:744.87px;">-1.47ms</span>
<span class="t" style="left:217.5px;top:744.87px;">528µs</span>
<span class="t" style="left:182.3px;top:682.37px;">50Ω</span>
<div style="left:213.2px;top:680.2px;width:55.5px;height:15.6px;background:#fff;border:1px solid #d0d0d0"></div>
<span style="left:215px;top:681.0px;font-size:8.5px;line-height:1;color:#000">B</span>
<span style="left:220.2px;top:685.4000000000001px;font-size:11px;line-height:1;color:#000;font-weight:bold">W</span>
<span class="t" style="left:230.2px;top:682.37px;color:#000">:4.0G</span>
<span class="t" style="left:182.3px;top:703.47px;">50Ω</span>
<div style="left:213.2px;top:701.2px;width:55.5px;height:15.6px;background:#fff;border:1px solid #d0d0d0"></div>
<span style="left:215px;top:702.0px;font-size:8.5px;line-height:1;color:#000">B</span>
<span style="left:220.2px;top:706.4000000000001px;font-size:11px;line-height:1;color:#000;font-weight:bold">W</span>
<span class="t" style="left:230.2px;top:703.47px;color:#000">:4.0G</span>
<div class="pn" style="left:306px;top:674px;width:137px;height:70px"></div>
<div style="left:352px;top:680px;width:86px;height:64px;border:1px solid #c4c4c4;border-bottom:none"></div>
<div style="left:352px;top:701px;width:86px;height:1px;background:#c4c4c4"></div>
<div style="left:352px;top:722px;width:86px;height:1px;background:#c4c4c4"></div>
<div class="pill" style="left:313.5px;top:682.4px;width:37px;height:15px;background:linear-gradient(#c4c4c4,#909090 40%,#383838)"><div class="pill" style="left:1.7px;top:1.8px;width:33.6px;height:11.7px;background:radial-gradient(ellipse at 50% 40%,#ff30ff,#e800e8 60%,#b000b0)"></div><span class="pt" style="left:0;width:37px;top:2.60px">V1</span></div>
<div class="pill" style="left:313.5px;top:703.2px;width:37px;height:15px;background:linear-gradient(#c4c4c4,#909090 40%,#383838)"><div class="pill" style="left:1.7px;top:1.8px;width:33.6px;height:11.7px;background:radial-gradient(ellipse at 50% 40%,#ff30ff,#e800e8 60%,#b000b0)"></div><span class="pt" style="left:0;width:37px;top:2.60px">V2</span></div>
<div class="pill" style="left:313.5px;top:724.3px;width:37px;height:15px;background:linear-gradient(#c4c4c4,#909090 40%,#383838)"><div class="pill" style="left:1.7px;top:1.8px;width:33.6px;height:11.7px;background:radial-gradient(ellipse at 50% 40%,#ff30ff,#e800e8 60%,#b000b0)"></div><span class="pt" style="left:0;width:37px;top:2.60px">ΔV</span></div>
<span class="t" style="left:354.3px;top:685.07px;">556mV</span>
<span class="t" style="left:354.3px;top:706.17px;">157.58mV</span>
<span class="t" style="left:354.6px;top:727.27px;">-398.42mV</span>
<div class="pn" style="left:591px;top:674px;width:186px;height:24px"></div>
<div style="left:597px;top:681px;width:16px;height:15px;background:#c8c8c8;border:1px solid #ff9020"></div>
<span style="left:599px;top:682.3px;font-size:12px;line-height:1;color:#000">A'</span>
<div class="pill" style="left:614.3px;top:681.6px;width:33px;height:13.8px;background:linear-gradient(#c4c4c4,#909090 40%,#383838)"><div class="pill" style="left:1.7px;top:1.8px;width:29.6px;height:10.5px;background:radial-gradient(ellipse at 50% 40%,#ffff30,#e8e800 60%,#b8b800)"></div><span class="pt" style="left:0;width:33px;top:2.00px">C1</span></div>
<svg width="20" height="16" style="position:absolute;left:649px;top:680px"><path d="M1.6 13H5.6L11.2 2.2H15.8" stroke="#fff" stroke-width="1.7" fill="none"/></svg>
<span class="t" style="left:668.2px;top:682.27px;">1.03V</span>
<div class="pn" style="left:781px;top:674px;width:231px;height:93px"></div>
<span class="t" style="left:789px;top:682.02px;">40.0ms/div</span>
<span class="t" style="left:854px;top:682.02px;">25.0MS/s</span>
<span class="t" style="left:939px;top:682.02px;">40.0ns/pt</span>
<span class="t" style="left:789px;top:703.27px;color:#ff1818">Stopped</span>
<span class="t" style="left:880.3px;top:703.27px;">Single Seq</span>
<span class="t" style="left:789.5px;top:724.02px;">1 acqs</span>
<span class="t" style="left:929px;top:724.02px;">RL:10.0M</span>
<span class="t" style="left:789px;top:745.27px;">Auto</span>
<span class="t" style="left:831px;top:745.27px;">January 13, 2004</span>
<span class="t" style="left:956px;top:745.27px;color:#ff9800">23:53:44</span>
</div></body></html>
